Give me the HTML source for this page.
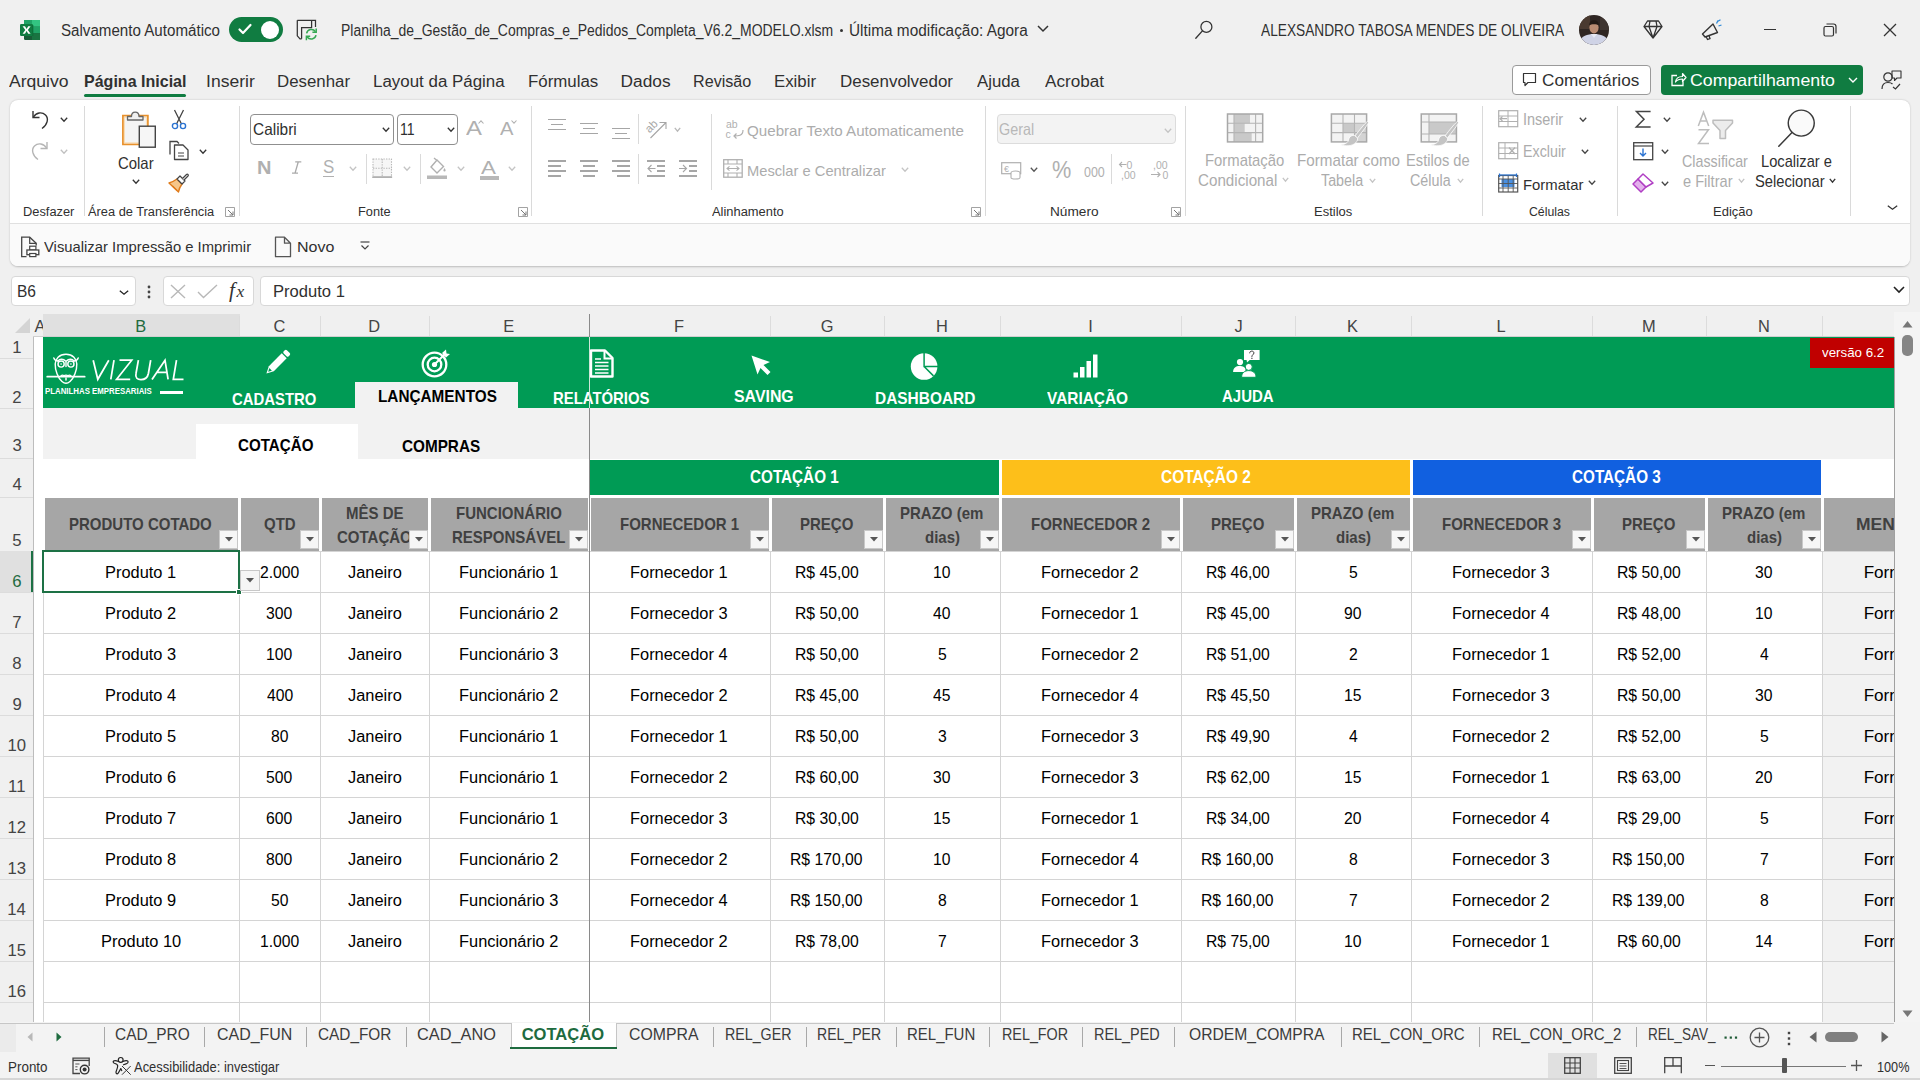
<!DOCTYPE html>
<html><head><meta charset="utf-8"><style>
html,body{margin:0;padding:0;width:1920px;height:1080px;overflow:hidden;background:#f0f0f0;position:relative;font-family:"Liberation Sans",sans-serif;}
.t{position:absolute;white-space:pre;line-height:1;transform-origin:0 0;}
svg{overflow:visible}

</style></head><body>
<div style="position:absolute;left:33px;top:337px;width:1861px;height:685px;background:#fff"></div>
<div style="position:absolute;left:43px;top:551px;width:1851px;height:1px;background:#d4d4d4"></div>
<div style="position:absolute;left:43px;top:592px;width:1851px;height:1px;background:#d4d4d4"></div>
<div style="position:absolute;left:43px;top:633px;width:1851px;height:1px;background:#d4d4d4"></div>
<div style="position:absolute;left:43px;top:674px;width:1851px;height:1px;background:#d4d4d4"></div>
<div style="position:absolute;left:43px;top:715px;width:1851px;height:1px;background:#d4d4d4"></div>
<div style="position:absolute;left:43px;top:756px;width:1851px;height:1px;background:#d4d4d4"></div>
<div style="position:absolute;left:43px;top:797px;width:1851px;height:1px;background:#d4d4d4"></div>
<div style="position:absolute;left:43px;top:838px;width:1851px;height:1px;background:#d4d4d4"></div>
<div style="position:absolute;left:43px;top:879px;width:1851px;height:1px;background:#d4d4d4"></div>
<div style="position:absolute;left:43px;top:920px;width:1851px;height:1px;background:#d4d4d4"></div>
<div style="position:absolute;left:43px;top:961px;width:1851px;height:1px;background:#d4d4d4"></div>
<div style="position:absolute;left:43px;top:1002px;width:1851px;height:1px;background:#d4d4d4"></div>
<div style="position:absolute;left:43px;top:551px;width:1px;height:471px;background:#d4d4d4"></div>
<div style="position:absolute;left:239px;top:551px;width:1px;height:471px;background:#d4d4d4"></div>
<div style="position:absolute;left:320px;top:551px;width:1px;height:471px;background:#d4d4d4"></div>
<div style="position:absolute;left:429px;top:551px;width:1px;height:471px;background:#d4d4d4"></div>
<div style="position:absolute;left:589px;top:551px;width:1px;height:471px;background:#d4d4d4"></div>
<div style="position:absolute;left:770px;top:551px;width:1px;height:471px;background:#d4d4d4"></div>
<div style="position:absolute;left:884px;top:551px;width:1px;height:471px;background:#d4d4d4"></div>
<div style="position:absolute;left:1000px;top:551px;width:1px;height:471px;background:#d4d4d4"></div>
<div style="position:absolute;left:1181px;top:551px;width:1px;height:471px;background:#d4d4d4"></div>
<div style="position:absolute;left:1295px;top:551px;width:1px;height:471px;background:#d4d4d4"></div>
<div style="position:absolute;left:1411px;top:551px;width:1px;height:471px;background:#d4d4d4"></div>
<div style="position:absolute;left:1592px;top:551px;width:1px;height:471px;background:#d4d4d4"></div>
<div style="position:absolute;left:1706px;top:551px;width:1px;height:471px;background:#d4d4d4"></div>
<div style="position:absolute;left:1822px;top:551px;width:1px;height:471px;background:#d4d4d4"></div>
<div style="position:absolute;left:1823px;top:552px;width:71px;height:470px;background:#f2f2f2"></div>
<div style="position:absolute;left:1823px;top:592px;width:71px;height:1px;background:#d4d4d4"></div>
<div style="position:absolute;left:1823px;top:633px;width:71px;height:1px;background:#d4d4d4"></div>
<div style="position:absolute;left:1823px;top:674px;width:71px;height:1px;background:#d4d4d4"></div>
<div style="position:absolute;left:1823px;top:715px;width:71px;height:1px;background:#d4d4d4"></div>
<div style="position:absolute;left:1823px;top:756px;width:71px;height:1px;background:#d4d4d4"></div>
<div style="position:absolute;left:1823px;top:797px;width:71px;height:1px;background:#d4d4d4"></div>
<div style="position:absolute;left:1823px;top:838px;width:71px;height:1px;background:#d4d4d4"></div>
<div style="position:absolute;left:1823px;top:879px;width:71px;height:1px;background:#d4d4d4"></div>
<div style="position:absolute;left:1823px;top:920px;width:71px;height:1px;background:#d4d4d4"></div>
<div style="position:absolute;left:1823px;top:961px;width:71px;height:1px;background:#d4d4d4"></div>
<div style="position:absolute;left:1823px;top:1002px;width:71px;height:1px;background:#d4d4d4"></div>
<div style="position:absolute;left:43px;top:337px;width:1851px;height:71px;background:#009b55"></div>
<div style="position:absolute;left:43px;top:408px;width:1851px;height:51px;background:#f2f2f2"></div>
<div style="position:absolute;left:33px;top:337px;width:10px;height:685px;background:#fff"></div>
<div style="position:absolute;left:590px;top:460px;width:409px;height:35px;background:#009b55"></div>
<div style="position:absolute;left:1002px;top:460px;width:408px;height:35px;background:#fdbf1a"></div>
<div style="position:absolute;left:1413px;top:460px;width:408px;height:35px;background:#1160e0"></div>
<div style="position:absolute;left:45px;top:498px;width:192.5px;height:53px;background:#a6a6a6"></div>
<div style="position:absolute;left:241px;top:498px;width:77.5px;height:53px;background:#a6a6a6"></div>
<div style="position:absolute;left:322px;top:498px;width:105.5px;height:53px;background:#a6a6a6"></div>
<div style="position:absolute;left:431px;top:498px;width:156.5px;height:53px;background:#a6a6a6"></div>
<div style="position:absolute;left:591px;top:498px;width:177.5px;height:53px;background:#a6a6a6"></div>
<div style="position:absolute;left:772px;top:498px;width:110.5px;height:53px;background:#a6a6a6"></div>
<div style="position:absolute;left:886px;top:498px;width:112.5px;height:53px;background:#a6a6a6"></div>
<div style="position:absolute;left:1002px;top:498px;width:177.5px;height:53px;background:#a6a6a6"></div>
<div style="position:absolute;left:1183px;top:498px;width:110.5px;height:53px;background:#a6a6a6"></div>
<div style="position:absolute;left:1297px;top:498px;width:112.5px;height:53px;background:#a6a6a6"></div>
<div style="position:absolute;left:1413px;top:498px;width:177.5px;height:53px;background:#a6a6a6"></div>
<div style="position:absolute;left:1594px;top:498px;width:110.5px;height:53px;background:#a6a6a6"></div>
<div style="position:absolute;left:1708px;top:498px;width:112.5px;height:53px;background:#a6a6a6"></div>
<div style="position:absolute;left:1824px;top:498px;width:70px;height:53px;background:#a6a6a6"></div>
<span class="t" style="left:69.41px;top:516.48px;font-size:17.15px;transform:scaleX(0.8750);font-weight:700;color:#404040;">PRODUTO COTADO</span>
<span class="t" style="left:263.60px;top:516.48px;font-size:17.15px;transform:scaleX(0.8750);font-weight:700;color:#404040;">QTD</span>
<span class="t" style="left:345.56px;top:504.78px;font-size:17.15px;transform:scaleX(0.8750);font-weight:700;color:#404040;">MÊS DE</span>
<span class="t" style="left:337.11px;top:528.58px;font-size:17.15px;transform:scaleX(0.8750);font-weight:700;color:#404040;">COTAÇÃO</span>
<span class="t" style="left:455.89px;top:504.78px;font-size:17.15px;transform:scaleX(0.8750);font-weight:700;color:#404040;">FUNCIONÁRIO</span>
<span class="t" style="left:452.00px;top:528.58px;font-size:17.15px;transform:scaleX(0.8750);font-weight:700;color:#404040;">RESPONSÁVEL</span>
<span class="t" style="left:619.63px;top:516.48px;font-size:17.15px;transform:scaleX(0.8750);font-weight:700;color:#404040;">FORNECEDOR 1</span>
<span class="t" style="left:800.15px;top:516.48px;font-size:17.15px;transform:scaleX(0.8750);font-weight:700;color:#404040;">PREÇO</span>
<span class="t" style="left:900.30px;top:504.78px;font-size:17.15px;transform:scaleX(0.8750);font-weight:700;color:#404040;">PRAZO (em</span>
<span class="t" style="left:924.51px;top:528.58px;font-size:17.15px;transform:scaleX(0.8750);font-weight:700;color:#404040;">dias)</span>
<span class="t" style="left:1030.70px;top:516.48px;font-size:17.15px;transform:scaleX(0.8750);font-weight:700;color:#404040;">FORNECEDOR 2</span>
<span class="t" style="left:1211.15px;top:516.48px;font-size:17.15px;transform:scaleX(0.8750);font-weight:700;color:#404040;">PREÇO</span>
<span class="t" style="left:1311.30px;top:504.78px;font-size:17.15px;transform:scaleX(0.8750);font-weight:700;color:#404040;">PRAZO (em</span>
<span class="t" style="left:1335.51px;top:528.58px;font-size:17.15px;transform:scaleX(0.8750);font-weight:700;color:#404040;">dias)</span>
<span class="t" style="left:1441.70px;top:516.48px;font-size:17.15px;transform:scaleX(0.8750);font-weight:700;color:#404040;">FORNECEDOR 3</span>
<span class="t" style="left:1622.15px;top:516.48px;font-size:17.15px;transform:scaleX(0.8750);font-weight:700;color:#404040;">PREÇO</span>
<span class="t" style="left:1722.30px;top:504.78px;font-size:17.15px;transform:scaleX(0.8750);font-weight:700;color:#404040;">PRAZO (em</span>
<span class="t" style="left:1746.51px;top:528.58px;font-size:17.15px;transform:scaleX(0.8750);font-weight:700;color:#404040;">dias)</span>
<span class="t" style="left:105.17px;top:564.34px;font-size:17.08px;transform:scaleX(0.9600);color:#000;">Produto 1</span>
<span class="t" style="left:259.73px;top:564.34px;font-size:17.08px;transform:scaleX(0.9200);color:#000;">2.000</span>
<span class="t" style="left:347.83px;top:564.34px;font-size:17.08px;transform:scaleX(0.9600);color:#000;">Janeiro</span>
<span class="t" style="left:459.05px;top:564.34px;font-size:17.08px;transform:scaleX(0.9600);color:#000;">Funcionário 1</span>
<span class="t" style="left:630.46px;top:564.34px;font-size:17.08px;transform:scaleX(0.9600);color:#000;">Fornecedor 1</span>
<span class="t" style="left:794.77px;top:564.34px;font-size:17.08px;transform:scaleX(0.9200);color:#000;">R$ 45,00</span>
<span class="t" style="left:933.00px;top:564.34px;font-size:17.08px;transform:scaleX(0.9200);color:#000;">10</span>
<span class="t" style="left:1041.46px;top:564.34px;font-size:17.08px;transform:scaleX(0.9600);color:#000;">Fornecedor 2</span>
<span class="t" style="left:1205.77px;top:564.34px;font-size:17.08px;transform:scaleX(0.9200);color:#000;">R$ 46,00</span>
<span class="t" style="left:1348.60px;top:564.34px;font-size:17.08px;transform:scaleX(0.9200);color:#000;">5</span>
<span class="t" style="left:1452.38px;top:564.34px;font-size:17.08px;transform:scaleX(0.9600);color:#000;">Fornecedor 3</span>
<span class="t" style="left:1616.77px;top:564.34px;font-size:17.08px;transform:scaleX(0.9200);color:#000;">R$ 50,00</span>
<span class="t" style="left:1755.31px;top:564.34px;font-size:17.08px;transform:scaleX(0.9200);color:#000;">30</span>
<span class="t" style="left:1863.63px;top:564.34px;font-size:17.08px;color:#000;">Fornecedor</span>
<span class="t" style="left:105.17px;top:605.34px;font-size:17.08px;transform:scaleX(0.9600);color:#000;">Produto 2</span>
<span class="t" style="left:266.44px;top:605.34px;font-size:17.08px;transform:scaleX(0.9200);color:#000;">300</span>
<span class="t" style="left:347.83px;top:605.34px;font-size:17.08px;transform:scaleX(0.9600);color:#000;">Janeiro</span>
<span class="t" style="left:459.05px;top:605.34px;font-size:17.08px;transform:scaleX(0.9600);color:#000;">Funcionário 2</span>
<span class="t" style="left:630.38px;top:605.34px;font-size:17.08px;transform:scaleX(0.9600);color:#000;">Fornecedor 3</span>
<span class="t" style="left:794.77px;top:605.34px;font-size:17.08px;transform:scaleX(0.9200);color:#000;">R$ 50,00</span>
<span class="t" style="left:933.39px;top:605.34px;font-size:17.08px;transform:scaleX(0.9200);color:#000;">40</span>
<span class="t" style="left:1041.46px;top:605.34px;font-size:17.08px;transform:scaleX(0.9600);color:#000;">Fornecedor 1</span>
<span class="t" style="left:1205.77px;top:605.34px;font-size:17.08px;transform:scaleX(0.9200);color:#000;">R$ 45,00</span>
<span class="t" style="left:1344.23px;top:605.34px;font-size:17.08px;transform:scaleX(0.9200);color:#000;">90</span>
<span class="t" style="left:1452.30px;top:605.34px;font-size:17.08px;transform:scaleX(0.9600);color:#000;">Fornecedor 4</span>
<span class="t" style="left:1616.77px;top:605.34px;font-size:17.08px;transform:scaleX(0.9200);color:#000;">R$ 48,00</span>
<span class="t" style="left:1755.00px;top:605.34px;font-size:17.08px;transform:scaleX(0.9200);color:#000;">10</span>
<span class="t" style="left:1863.63px;top:605.34px;font-size:17.08px;color:#000;">Fornecedor</span>
<span class="t" style="left:105.09px;top:646.34px;font-size:17.08px;transform:scaleX(0.9600);color:#000;">Produto 3</span>
<span class="t" style="left:266.13px;top:646.34px;font-size:17.08px;transform:scaleX(0.9200);color:#000;">100</span>
<span class="t" style="left:347.83px;top:646.34px;font-size:17.08px;transform:scaleX(0.9600);color:#000;">Janeiro</span>
<span class="t" style="left:458.97px;top:646.34px;font-size:17.08px;transform:scaleX(0.9600);color:#000;">Funcionário 3</span>
<span class="t" style="left:630.30px;top:646.34px;font-size:17.08px;transform:scaleX(0.9600);color:#000;">Fornecedor 4</span>
<span class="t" style="left:794.77px;top:646.34px;font-size:17.08px;transform:scaleX(0.9200);color:#000;">R$ 50,00</span>
<span class="t" style="left:937.60px;top:646.34px;font-size:17.08px;transform:scaleX(0.9200);color:#000;">5</span>
<span class="t" style="left:1041.46px;top:646.34px;font-size:17.08px;transform:scaleX(0.9600);color:#000;">Fornecedor 2</span>
<span class="t" style="left:1205.77px;top:646.34px;font-size:17.08px;transform:scaleX(0.9200);color:#000;">R$ 51,00</span>
<span class="t" style="left:1348.60px;top:646.34px;font-size:17.08px;transform:scaleX(0.9200);color:#000;">2</span>
<span class="t" style="left:1452.46px;top:646.34px;font-size:17.08px;transform:scaleX(0.9600);color:#000;">Fornecedor 1</span>
<span class="t" style="left:1616.77px;top:646.34px;font-size:17.08px;transform:scaleX(0.9200);color:#000;">R$ 52,00</span>
<span class="t" style="left:1759.68px;top:646.34px;font-size:17.08px;transform:scaleX(0.9200);color:#000;">4</span>
<span class="t" style="left:1863.63px;top:646.34px;font-size:17.08px;color:#000;">Fornecedor</span>
<span class="t" style="left:105.01px;top:687.34px;font-size:17.08px;transform:scaleX(0.9600);color:#000;">Produto 4</span>
<span class="t" style="left:266.52px;top:687.34px;font-size:17.08px;transform:scaleX(0.9200);color:#000;">400</span>
<span class="t" style="left:347.83px;top:687.34px;font-size:17.08px;transform:scaleX(0.9600);color:#000;">Janeiro</span>
<span class="t" style="left:459.05px;top:687.34px;font-size:17.08px;transform:scaleX(0.9600);color:#000;">Funcionário 2</span>
<span class="t" style="left:630.46px;top:687.34px;font-size:17.08px;transform:scaleX(0.9600);color:#000;">Fornecedor 2</span>
<span class="t" style="left:794.77px;top:687.34px;font-size:17.08px;transform:scaleX(0.9200);color:#000;">R$ 45,00</span>
<span class="t" style="left:933.39px;top:687.34px;font-size:17.08px;transform:scaleX(0.9200);color:#000;">45</span>
<span class="t" style="left:1041.30px;top:687.34px;font-size:17.08px;transform:scaleX(0.9600);color:#000;">Fornecedor 4</span>
<span class="t" style="left:1205.77px;top:687.34px;font-size:17.08px;transform:scaleX(0.9200);color:#000;">R$ 45,50</span>
<span class="t" style="left:1344.00px;top:687.34px;font-size:17.08px;transform:scaleX(0.9200);color:#000;">15</span>
<span class="t" style="left:1452.38px;top:687.34px;font-size:17.08px;transform:scaleX(0.9600);color:#000;">Fornecedor 3</span>
<span class="t" style="left:1616.77px;top:687.34px;font-size:17.08px;transform:scaleX(0.9200);color:#000;">R$ 50,00</span>
<span class="t" style="left:1755.31px;top:687.34px;font-size:17.08px;transform:scaleX(0.9200);color:#000;">30</span>
<span class="t" style="left:1863.63px;top:687.34px;font-size:17.08px;color:#000;">Fornecedor</span>
<span class="t" style="left:105.09px;top:728.34px;font-size:17.08px;transform:scaleX(0.9600);color:#000;">Produto 5</span>
<span class="t" style="left:270.73px;top:728.34px;font-size:17.08px;transform:scaleX(0.9200);color:#000;">80</span>
<span class="t" style="left:347.83px;top:728.34px;font-size:17.08px;transform:scaleX(0.9600);color:#000;">Janeiro</span>
<span class="t" style="left:459.05px;top:728.34px;font-size:17.08px;transform:scaleX(0.9600);color:#000;">Funcionário 1</span>
<span class="t" style="left:630.46px;top:728.34px;font-size:17.08px;transform:scaleX(0.9600);color:#000;">Fornecedor 1</span>
<span class="t" style="left:794.77px;top:728.34px;font-size:17.08px;transform:scaleX(0.9200);color:#000;">R$ 50,00</span>
<span class="t" style="left:937.68px;top:728.34px;font-size:17.08px;transform:scaleX(0.9200);color:#000;">3</span>
<span class="t" style="left:1041.38px;top:728.34px;font-size:17.08px;transform:scaleX(0.9600);color:#000;">Fornecedor 3</span>
<span class="t" style="left:1205.77px;top:728.34px;font-size:17.08px;transform:scaleX(0.9200);color:#000;">R$ 49,90</span>
<span class="t" style="left:1348.68px;top:728.34px;font-size:17.08px;transform:scaleX(0.9200);color:#000;">4</span>
<span class="t" style="left:1452.46px;top:728.34px;font-size:17.08px;transform:scaleX(0.9600);color:#000;">Fornecedor 2</span>
<span class="t" style="left:1616.77px;top:728.34px;font-size:17.08px;transform:scaleX(0.9200);color:#000;">R$ 52,00</span>
<span class="t" style="left:1759.60px;top:728.34px;font-size:17.08px;transform:scaleX(0.9200);color:#000;">5</span>
<span class="t" style="left:1863.63px;top:728.34px;font-size:17.08px;color:#000;">Fornecedor</span>
<span class="t" style="left:105.09px;top:769.34px;font-size:17.08px;transform:scaleX(0.9600);color:#000;">Produto 6</span>
<span class="t" style="left:266.36px;top:769.34px;font-size:17.08px;transform:scaleX(0.9200);color:#000;">500</span>
<span class="t" style="left:347.83px;top:769.34px;font-size:17.08px;transform:scaleX(0.9600);color:#000;">Janeiro</span>
<span class="t" style="left:459.05px;top:769.34px;font-size:17.08px;transform:scaleX(0.9600);color:#000;">Funcionário 1</span>
<span class="t" style="left:630.46px;top:769.34px;font-size:17.08px;transform:scaleX(0.9600);color:#000;">Fornecedor 2</span>
<span class="t" style="left:794.77px;top:769.34px;font-size:17.08px;transform:scaleX(0.9200);color:#000;">R$ 60,00</span>
<span class="t" style="left:933.31px;top:769.34px;font-size:17.08px;transform:scaleX(0.9200);color:#000;">30</span>
<span class="t" style="left:1041.38px;top:769.34px;font-size:17.08px;transform:scaleX(0.9600);color:#000;">Fornecedor 3</span>
<span class="t" style="left:1205.77px;top:769.34px;font-size:17.08px;transform:scaleX(0.9200);color:#000;">R$ 62,00</span>
<span class="t" style="left:1344.00px;top:769.34px;font-size:17.08px;transform:scaleX(0.9200);color:#000;">15</span>
<span class="t" style="left:1452.46px;top:769.34px;font-size:17.08px;transform:scaleX(0.9600);color:#000;">Fornecedor 1</span>
<span class="t" style="left:1616.77px;top:769.34px;font-size:17.08px;transform:scaleX(0.9200);color:#000;">R$ 63,00</span>
<span class="t" style="left:1755.15px;top:769.34px;font-size:17.08px;transform:scaleX(0.9200);color:#000;">20</span>
<span class="t" style="left:1863.63px;top:769.34px;font-size:17.08px;color:#000;">Fornecedor</span>
<span class="t" style="left:105.17px;top:810.34px;font-size:17.08px;transform:scaleX(0.9600);color:#000;">Produto 7</span>
<span class="t" style="left:266.28px;top:810.34px;font-size:17.08px;transform:scaleX(0.9200);color:#000;">600</span>
<span class="t" style="left:347.83px;top:810.34px;font-size:17.08px;transform:scaleX(0.9600);color:#000;">Janeiro</span>
<span class="t" style="left:459.05px;top:810.34px;font-size:17.08px;transform:scaleX(0.9600);color:#000;">Funcionário 1</span>
<span class="t" style="left:630.38px;top:810.34px;font-size:17.08px;transform:scaleX(0.9600);color:#000;">Fornecedor 3</span>
<span class="t" style="left:794.77px;top:810.34px;font-size:17.08px;transform:scaleX(0.9200);color:#000;">R$ 30,00</span>
<span class="t" style="left:933.00px;top:810.34px;font-size:17.08px;transform:scaleX(0.9200);color:#000;">15</span>
<span class="t" style="left:1041.46px;top:810.34px;font-size:17.08px;transform:scaleX(0.9600);color:#000;">Fornecedor 1</span>
<span class="t" style="left:1205.77px;top:810.34px;font-size:17.08px;transform:scaleX(0.9200);color:#000;">R$ 34,00</span>
<span class="t" style="left:1344.15px;top:810.34px;font-size:17.08px;transform:scaleX(0.9200);color:#000;">20</span>
<span class="t" style="left:1452.30px;top:810.34px;font-size:17.08px;transform:scaleX(0.9600);color:#000;">Fornecedor 4</span>
<span class="t" style="left:1616.77px;top:810.34px;font-size:17.08px;transform:scaleX(0.9200);color:#000;">R$ 29,00</span>
<span class="t" style="left:1759.60px;top:810.34px;font-size:17.08px;transform:scaleX(0.9200);color:#000;">5</span>
<span class="t" style="left:1863.63px;top:810.34px;font-size:17.08px;color:#000;">Fornecedor</span>
<span class="t" style="left:105.09px;top:851.34px;font-size:17.08px;transform:scaleX(0.9600);color:#000;">Produto 8</span>
<span class="t" style="left:266.36px;top:851.34px;font-size:17.08px;transform:scaleX(0.9200);color:#000;">800</span>
<span class="t" style="left:347.83px;top:851.34px;font-size:17.08px;transform:scaleX(0.9600);color:#000;">Janeiro</span>
<span class="t" style="left:459.05px;top:851.34px;font-size:17.08px;transform:scaleX(0.9600);color:#000;">Funcionário 2</span>
<span class="t" style="left:630.46px;top:851.34px;font-size:17.08px;transform:scaleX(0.9600);color:#000;">Fornecedor 2</span>
<span class="t" style="left:790.40px;top:851.34px;font-size:17.08px;transform:scaleX(0.9200);color:#000;">R$ 170,00</span>
<span class="t" style="left:933.00px;top:851.34px;font-size:17.08px;transform:scaleX(0.9200);color:#000;">10</span>
<span class="t" style="left:1041.30px;top:851.34px;font-size:17.08px;transform:scaleX(0.9600);color:#000;">Fornecedor 4</span>
<span class="t" style="left:1201.40px;top:851.34px;font-size:17.08px;transform:scaleX(0.9200);color:#000;">R$ 160,00</span>
<span class="t" style="left:1348.60px;top:851.34px;font-size:17.08px;transform:scaleX(0.9200);color:#000;">8</span>
<span class="t" style="left:1452.38px;top:851.34px;font-size:17.08px;transform:scaleX(0.9600);color:#000;">Fornecedor 3</span>
<span class="t" style="left:1612.40px;top:851.34px;font-size:17.08px;transform:scaleX(0.9200);color:#000;">R$ 150,00</span>
<span class="t" style="left:1759.60px;top:851.34px;font-size:17.08px;transform:scaleX(0.9200);color:#000;">7</span>
<span class="t" style="left:1863.63px;top:851.34px;font-size:17.08px;color:#000;">Fornecedor</span>
<span class="t" style="left:105.17px;top:892.34px;font-size:17.08px;transform:scaleX(0.9600);color:#000;">Produto 9</span>
<span class="t" style="left:270.73px;top:892.34px;font-size:17.08px;transform:scaleX(0.9200);color:#000;">50</span>
<span class="t" style="left:347.83px;top:892.34px;font-size:17.08px;transform:scaleX(0.9600);color:#000;">Janeiro</span>
<span class="t" style="left:458.97px;top:892.34px;font-size:17.08px;transform:scaleX(0.9600);color:#000;">Funcionário 3</span>
<span class="t" style="left:630.30px;top:892.34px;font-size:17.08px;transform:scaleX(0.9600);color:#000;">Fornecedor 4</span>
<span class="t" style="left:790.40px;top:892.34px;font-size:17.08px;transform:scaleX(0.9200);color:#000;">R$ 150,00</span>
<span class="t" style="left:937.60px;top:892.34px;font-size:17.08px;transform:scaleX(0.9200);color:#000;">8</span>
<span class="t" style="left:1041.46px;top:892.34px;font-size:17.08px;transform:scaleX(0.9600);color:#000;">Fornecedor 1</span>
<span class="t" style="left:1201.40px;top:892.34px;font-size:17.08px;transform:scaleX(0.9200);color:#000;">R$ 160,00</span>
<span class="t" style="left:1348.60px;top:892.34px;font-size:17.08px;transform:scaleX(0.9200);color:#000;">7</span>
<span class="t" style="left:1452.46px;top:892.34px;font-size:17.08px;transform:scaleX(0.9600);color:#000;">Fornecedor 2</span>
<span class="t" style="left:1612.40px;top:892.34px;font-size:17.08px;transform:scaleX(0.9200);color:#000;">R$ 139,00</span>
<span class="t" style="left:1759.60px;top:892.34px;font-size:17.08px;transform:scaleX(0.9200);color:#000;">8</span>
<span class="t" style="left:1863.63px;top:892.34px;font-size:17.08px;color:#000;">Fornecedor</span>
<span class="t" style="left:100.53px;top:933.34px;font-size:17.08px;transform:scaleX(0.9600);color:#000;">Produto 10</span>
<span class="t" style="left:259.57px;top:933.34px;font-size:17.08px;transform:scaleX(0.9200);color:#000;">1.000</span>
<span class="t" style="left:347.83px;top:933.34px;font-size:17.08px;transform:scaleX(0.9600);color:#000;">Janeiro</span>
<span class="t" style="left:459.05px;top:933.34px;font-size:17.08px;transform:scaleX(0.9600);color:#000;">Funcionário 2</span>
<span class="t" style="left:630.46px;top:933.34px;font-size:17.08px;transform:scaleX(0.9600);color:#000;">Fornecedor 2</span>
<span class="t" style="left:794.77px;top:933.34px;font-size:17.08px;transform:scaleX(0.9200);color:#000;">R$ 78,00</span>
<span class="t" style="left:937.60px;top:933.34px;font-size:17.08px;transform:scaleX(0.9200);color:#000;">7</span>
<span class="t" style="left:1041.38px;top:933.34px;font-size:17.08px;transform:scaleX(0.9600);color:#000;">Fornecedor 3</span>
<span class="t" style="left:1205.77px;top:933.34px;font-size:17.08px;transform:scaleX(0.9200);color:#000;">R$ 75,00</span>
<span class="t" style="left:1344.00px;top:933.34px;font-size:17.08px;transform:scaleX(0.9200);color:#000;">10</span>
<span class="t" style="left:1452.46px;top:933.34px;font-size:17.08px;transform:scaleX(0.9600);color:#000;">Fornecedor 1</span>
<span class="t" style="left:1616.77px;top:933.34px;font-size:17.08px;transform:scaleX(0.9200);color:#000;">R$ 60,00</span>
<span class="t" style="left:1754.92px;top:933.34px;font-size:17.08px;transform:scaleX(0.9200);color:#000;">14</span>
<span class="t" style="left:1863.63px;top:933.34px;font-size:17.08px;color:#000;">Fornecedor</span>
<span class="t" style="left:1855.55px;top:516.48px;font-size:17.15px;transform:scaleX(1.0200);font-weight:700;color:#404040;">MENSAGEM</span>
<div style="position:absolute;left:219px;top:530px;width:19px;height:19px;background:#f6f6f6;border:1px solid #c8c8c8;box-sizing:border-box"></div>
<svg style="position:absolute;left:225px;top:537px;" width="8" height="5" viewBox="0 0 8 5"><path d="M0 0H8L4 4.5Z" fill="#555"/></svg>
<div style="position:absolute;left:300px;top:530px;width:19px;height:19px;background:#f6f6f6;border:1px solid #c8c8c8;box-sizing:border-box"></div>
<svg style="position:absolute;left:306px;top:537px;" width="8" height="5" viewBox="0 0 8 5"><path d="M0 0H8L4 4.5Z" fill="#555"/></svg>
<div style="position:absolute;left:409px;top:530px;width:19px;height:19px;background:#f6f6f6;border:1px solid #c8c8c8;box-sizing:border-box"></div>
<svg style="position:absolute;left:415px;top:537px;" width="8" height="5" viewBox="0 0 8 5"><path d="M0 0H8L4 4.5Z" fill="#555"/></svg>
<div style="position:absolute;left:569px;top:530px;width:19px;height:19px;background:#f6f6f6;border:1px solid #c8c8c8;box-sizing:border-box"></div>
<svg style="position:absolute;left:575px;top:537px;" width="8" height="5" viewBox="0 0 8 5"><path d="M0 0H8L4 4.5Z" fill="#555"/></svg>
<div style="position:absolute;left:750px;top:530px;width:19px;height:19px;background:#f6f6f6;border:1px solid #c8c8c8;box-sizing:border-box"></div>
<svg style="position:absolute;left:756px;top:537px;" width="8" height="5" viewBox="0 0 8 5"><path d="M0 0H8L4 4.5Z" fill="#555"/></svg>
<div style="position:absolute;left:864px;top:530px;width:19px;height:19px;background:#f6f6f6;border:1px solid #c8c8c8;box-sizing:border-box"></div>
<svg style="position:absolute;left:870px;top:537px;" width="8" height="5" viewBox="0 0 8 5"><path d="M0 0H8L4 4.5Z" fill="#555"/></svg>
<div style="position:absolute;left:980px;top:530px;width:19px;height:19px;background:#f6f6f6;border:1px solid #c8c8c8;box-sizing:border-box"></div>
<svg style="position:absolute;left:986px;top:537px;" width="8" height="5" viewBox="0 0 8 5"><path d="M0 0H8L4 4.5Z" fill="#555"/></svg>
<div style="position:absolute;left:1161px;top:530px;width:19px;height:19px;background:#f6f6f6;border:1px solid #c8c8c8;box-sizing:border-box"></div>
<svg style="position:absolute;left:1167px;top:537px;" width="8" height="5" viewBox="0 0 8 5"><path d="M0 0H8L4 4.5Z" fill="#555"/></svg>
<div style="position:absolute;left:1275px;top:530px;width:19px;height:19px;background:#f6f6f6;border:1px solid #c8c8c8;box-sizing:border-box"></div>
<svg style="position:absolute;left:1281px;top:537px;" width="8" height="5" viewBox="0 0 8 5"><path d="M0 0H8L4 4.5Z" fill="#555"/></svg>
<div style="position:absolute;left:1391px;top:530px;width:19px;height:19px;background:#f6f6f6;border:1px solid #c8c8c8;box-sizing:border-box"></div>
<svg style="position:absolute;left:1397px;top:537px;" width="8" height="5" viewBox="0 0 8 5"><path d="M0 0H8L4 4.5Z" fill="#555"/></svg>
<div style="position:absolute;left:1572px;top:530px;width:19px;height:19px;background:#f6f6f6;border:1px solid #c8c8c8;box-sizing:border-box"></div>
<svg style="position:absolute;left:1578px;top:537px;" width="8" height="5" viewBox="0 0 8 5"><path d="M0 0H8L4 4.5Z" fill="#555"/></svg>
<div style="position:absolute;left:1686px;top:530px;width:19px;height:19px;background:#f6f6f6;border:1px solid #c8c8c8;box-sizing:border-box"></div>
<svg style="position:absolute;left:1692px;top:537px;" width="8" height="5" viewBox="0 0 8 5"><path d="M0 0H8L4 4.5Z" fill="#555"/></svg>
<div style="position:absolute;left:1802px;top:530px;width:19px;height:19px;background:#f6f6f6;border:1px solid #c8c8c8;box-sizing:border-box"></div>
<svg style="position:absolute;left:1808px;top:537px;" width="8" height="5" viewBox="0 0 8 5"><path d="M0 0H8L4 4.5Z" fill="#555"/></svg>
<div style="position:absolute;left:42px;top:550px;width:198px;height:43px;border:2px solid #1d7145;box-sizing:border-box"></div>
<div style="position:absolute;left:236px;top:589px;width:6px;height:6px;background:#1d7145;border:1px solid #fff;box-sizing:border-box"></div>
<div style="position:absolute;left:240px;top:570px;width:20px;height:21px;background:#f6f6f6;border:1px solid #c8c8c8;box-sizing:border-box"></div>
<svg style="position:absolute;left:246px;top:578px;" width="8" height="5" viewBox="0 0 8 5"><path d="M0 0H8L4 4.5Z" fill="#555"/></svg>
<div style="position:absolute;left:0px;top:312px;width:1894px;height:25px;background:#f0f0f0"></div>
<div style="position:absolute;left:43px;top:314px;width:196.5px;height:22px;background:#e0e0e0"></div>
<div style="position:absolute;left:239px;top:316px;width:1px;height:20px;background:#dcdcdc"></div>
<div style="position:absolute;left:320px;top:316px;width:1px;height:20px;background:#dcdcdc"></div>
<div style="position:absolute;left:429px;top:316px;width:1px;height:20px;background:#dcdcdc"></div>
<div style="position:absolute;left:589px;top:316px;width:1px;height:20px;background:#dcdcdc"></div>
<div style="position:absolute;left:770px;top:316px;width:1px;height:20px;background:#dcdcdc"></div>
<div style="position:absolute;left:884px;top:316px;width:1px;height:20px;background:#dcdcdc"></div>
<div style="position:absolute;left:1000px;top:316px;width:1px;height:20px;background:#dcdcdc"></div>
<div style="position:absolute;left:1181px;top:316px;width:1px;height:20px;background:#dcdcdc"></div>
<div style="position:absolute;left:1295px;top:316px;width:1px;height:20px;background:#dcdcdc"></div>
<div style="position:absolute;left:1411px;top:316px;width:1px;height:20px;background:#dcdcdc"></div>
<div style="position:absolute;left:1592px;top:316px;width:1px;height:20px;background:#dcdcdc"></div>
<div style="position:absolute;left:1706px;top:316px;width:1px;height:20px;background:#dcdcdc"></div>
<div style="position:absolute;left:1822px;top:316px;width:1px;height:20px;background:#dcdcdc"></div>
<div style="position:absolute;left:33px;top:336px;width:1861px;height:1px;background:#d0d0d0"></div>
<svg style="position:absolute;left:15px;top:318px;" width="16" height="16" viewBox="0 0 16 16"><path d="M15 0V15H0Z" fill="#d4d4d4"/></svg>
<span class="t" style="left:34.50px;top:317.90px;font-size:16.42px;color:#444;">A</span>
<div style="position:absolute;left:43px;top:314px;width:10px;height:22px;background:#e0e0e0"></div>
<span class="t" style="left:135.25px;top:317.90px;font-size:16.42px;color:#1f6b3f;">B</span>
<span class="t" style="left:273.42px;top:317.90px;font-size:16.42px;color:#444;">C</span>
<span class="t" style="left:368.26px;top:317.90px;font-size:16.42px;color:#444;">D</span>
<span class="t" style="left:503.17px;top:317.90px;font-size:16.42px;color:#444;">E</span>
<span class="t" style="left:674.08px;top:317.90px;font-size:16.42px;color:#444;">F</span>
<span class="t" style="left:820.76px;top:317.90px;font-size:16.42px;color:#444;">G</span>
<span class="t" style="left:936.01px;top:317.90px;font-size:16.42px;color:#444;">H</span>
<span class="t" style="left:1088.20px;top:317.90px;font-size:16.42px;color:#444;">I</span>
<span class="t" style="left:1234.39px;top:317.90px;font-size:16.42px;color:#444;">J</span>
<span class="t" style="left:1346.92px;top:317.90px;font-size:16.42px;color:#444;">K</span>
<span class="t" style="left:1496.49px;top:317.90px;font-size:16.42px;color:#444;">L</span>
<span class="t" style="left:1642.10px;top:317.90px;font-size:16.42px;color:#444;">M</span>
<span class="t" style="left:1758.01px;top:317.90px;font-size:16.42px;color:#444;">N</span>
<div style="position:absolute;left:0px;top:337px;width:33px;height:685px;background:#f0f0f0"></div>
<div style="position:absolute;left:33px;top:337px;width:1px;height:685px;background:#bdbdbd"></div>
<div style="position:absolute;left:0px;top:358px;width:33px;height:1px;background:#dcdcdc"></div>
<div style="position:absolute;left:0px;top:408px;width:33px;height:1px;background:#dcdcdc"></div>
<div style="position:absolute;left:0px;top:458px;width:33px;height:1px;background:#dcdcdc"></div>
<div style="position:absolute;left:0px;top:497px;width:33px;height:1px;background:#dcdcdc"></div>
<div style="position:absolute;left:0px;top:551px;width:33px;height:1px;background:#dcdcdc"></div>
<div style="position:absolute;left:0px;top:592px;width:33px;height:1px;background:#dcdcdc"></div>
<div style="position:absolute;left:0px;top:633px;width:33px;height:1px;background:#dcdcdc"></div>
<div style="position:absolute;left:0px;top:674px;width:33px;height:1px;background:#dcdcdc"></div>
<div style="position:absolute;left:0px;top:715px;width:33px;height:1px;background:#dcdcdc"></div>
<div style="position:absolute;left:0px;top:756px;width:33px;height:1px;background:#dcdcdc"></div>
<div style="position:absolute;left:0px;top:797px;width:33px;height:1px;background:#dcdcdc"></div>
<div style="position:absolute;left:0px;top:838px;width:33px;height:1px;background:#dcdcdc"></div>
<div style="position:absolute;left:0px;top:879px;width:33px;height:1px;background:#dcdcdc"></div>
<div style="position:absolute;left:0px;top:920px;width:33px;height:1px;background:#dcdcdc"></div>
<div style="position:absolute;left:0px;top:961px;width:33px;height:1px;background:#dcdcdc"></div>
<div style="position:absolute;left:0px;top:1002px;width:33px;height:1px;background:#dcdcdc"></div>
<div style="position:absolute;left:0px;top:1022px;width:33px;height:1px;background:#dcdcdc"></div>
<div style="position:absolute;left:0px;top:551px;width:33px;height:41px;background:#e0e0e0"></div>
<div style="position:absolute;left:31px;top:551px;width:2px;height:41px;background:#1d7145"></div>
<span class="t" style="left:12.15px;top:339.85px;font-size:16.72px;color:#444;">1</span>
<span class="t" style="left:12.32px;top:389.85px;font-size:16.72px;color:#444;">2</span>
<span class="t" style="left:12.40px;top:437.85px;font-size:16.72px;color:#444;">3</span>
<span class="t" style="left:12.40px;top:476.85px;font-size:16.72px;color:#444;">4</span>
<span class="t" style="left:12.32px;top:532.85px;font-size:16.72px;color:#444;">5</span>
<span class="t" style="left:12.24px;top:573.85px;font-size:16.72px;color:#1f6b3f;">6</span>
<span class="t" style="left:12.32px;top:614.85px;font-size:16.72px;color:#444;">7</span>
<span class="t" style="left:12.32px;top:655.85px;font-size:16.72px;color:#444;">8</span>
<span class="t" style="left:12.40px;top:696.85px;font-size:16.72px;color:#444;">9</span>
<span class="t" style="left:7.42px;top:737.85px;font-size:16.72px;color:#444;">10</span>
<span class="t" style="left:8.12px;top:778.85px;font-size:16.72px;color:#444;">11</span>
<span class="t" style="left:7.50px;top:819.85px;font-size:16.72px;color:#444;">12</span>
<span class="t" style="left:7.42px;top:860.85px;font-size:16.72px;color:#444;">13</span>
<span class="t" style="left:7.34px;top:901.85px;font-size:16.72px;color:#444;">14</span>
<span class="t" style="left:7.42px;top:942.85px;font-size:16.72px;color:#444;">15</span>
<span class="t" style="left:7.42px;top:983.85px;font-size:16.72px;color:#444;">16</span>
<svg style="position:absolute;left:44px;top:348px;" width="44" height="40" viewBox="0 0 44 40">
<g fill="none" stroke="#fff" stroke-width="1.45" stroke-linecap="round" stroke-linejoin="round">
<path d="M22 6.3 C15 6.3 11.5 11 11.2 16 C11 22 14 30 18 33.5 C19.5 34.8 20.5 35.3 22 35.3 C23.5 35.3 24.5 34.8 26 33.5 C30 30 33 22 32.8 16 C32.5 11 29 6.3 22 6.3Z"/>
<path d="M9.8 10 C10.5 12 12 13 14 13 M34.2 10 C33.5 12 32 13 30 13"/>
<circle cx="17.1" cy="16" r="3.1"/><circle cx="26.9" cy="16" r="3.1"/>
<path d="M14 13 C16 10.5 19 10.8 22 13.3 C25 10.8 28 10.5 30 13 M22 13.3 V18.5"/>
<path d="M3.2 28.7 H40.7" stroke-width="1.7"/>
<path d="M17 28 C18 26.8 19 26.8 20 28 C21 26.8 23 26.8 24 28 C25 26.8 26 26.8 27 28 M22 30 V32"/>
</g>
<circle cx="17.1" cy="16" r="1" fill="#fff" opacity="0.6"/><circle cx="26.9" cy="16" r="1" fill="#fff" opacity="0.6"/>
</svg>
<svg style="position:absolute;left:90px;top:352px;" width="100" height="30" viewBox="0 0 100 30"><g fill="none" stroke="#fff" stroke-width="1.75" stroke-linecap="butt" stroke-linejoin="miter">
<path d="M3.2 8.2 L7.8 27.3 L18.8 8.2"/>
<path d="M24 8.1 L20.8 27.4"/>
<path d="M29.5 8.2 H41.7 L26.6 27.3 H40.2"/>
<path d="M48.4 8.1 L46 21.5 C45 26 47.5 27.6 51 27.6 C55 27.6 57.5 26 58.4 21.5 L60.7 8.1"/>
<path d="M62 27.4 L75 8.2 L78.1 27.4 M66.8 20.4 H76.9"/>
<path d="M86.5 8.1 L83.3 27.3 H93.5"/>
</g></svg>
<span class="t" style="left:45.33px;top:388.39px;font-size:8.28px;transform:scaleX(0.9484);font-weight:700;color:#ffffff;">PLANILHAS EMPRESARIAIS</span>
<div style="position:absolute;left:159.5px;top:391.2px;width:23px;height:2.5px;background:#fff"></div>
<div style="position:absolute;left:355px;top:382px;width:163px;height:26px;background:#f2f2f2"></div>
<span class="t" style="left:232.40px;top:391.51px;font-size:15.70px;transform:scaleX(0.9484);font-weight:700;color:#ffffff;">CADASTRO</span>
<span class="t" style="left:378.28px;top:389.29px;font-size:15.84px;transform:scaleX(0.9679);font-weight:700;color:#000;">LANÇAMENTOS</span>
<span class="t" style="left:553.11px;top:391.03px;font-size:16.86px;transform:scaleX(0.8825);font-weight:700;color:#ffffff;">RELATÓRIOS</span>
<span class="t" style="left:734.18px;top:389.03px;font-size:16.86px;transform:scaleX(0.9423);font-weight:700;color:#ffffff;">SAVING</span>
<span class="t" style="left:875.07px;top:391.03px;font-size:16.86px;transform:scaleX(0.9163);font-weight:700;color:#ffffff;">DASHBOARD</span>
<span class="t" style="left:1047.00px;top:391.03px;font-size:16.86px;transform:scaleX(0.9144);font-weight:700;color:#ffffff;">VARIAÇÃO</span>
<span class="t" style="left:1221.70px;top:389.03px;font-size:16.86px;transform:scaleX(0.8890);font-weight:700;color:#ffffff;">AJUDA</span>
<svg style="position:absolute;left:263px;top:349px;" width="29" height="28" viewBox="0 0 29 28"><g transform="rotate(45 14 14)"><rect x="10.5" y="-2" width="7" height="4.5" rx="1.5" fill="#fff"/><path d="M10.5 3.8 H17.5 V22 L14 29 L10.5 22Z" fill="#fff"/><path d="M12.2 23 L14 26.5 L15.8 23Z" fill="#009b55"/></g></svg>
<svg style="position:absolute;left:421px;top:349px;" width="30" height="30" viewBox="0 0 30 30"><g fill="none" stroke="#fff" stroke-width="2.3"><circle cx="13.5" cy="15.5" r="11.8"/><circle cx="13.5" cy="15.5" r="6.8"/></g>
<circle cx="13.5" cy="15.5" r="2.6" fill="#fff"/><path d="M13.5 15.5 L24 5" stroke="#fff" stroke-width="2"/><path d="M21 4 L25 0.5 L25.5 4.5 L29 5 L25 8.5 Z" fill="#fff"/></svg>
<svg style="position:absolute;left:589px;top:349px;" width="26" height="29" viewBox="0 0 26 29"><path d="M2 1.5 H16 L23.5 9 V27.5 H2Z" fill="none" stroke="#fff" stroke-width="2.4" stroke-linejoin="round"/><path d="M15.5 1.5 V9.5 H23.5" fill="none" stroke="#fff" stroke-width="2"/>
<g stroke="#fff" stroke-width="1.6"><path d="M6 13.5H19.5M6 17H19.5M6 20.5H19.5M6 24H19.5M6 10H12"/></g></svg>
<svg style="position:absolute;left:751px;top:355px;" width="20" height="21" viewBox="0 0 20 21"><path d="M0.5 0.5 L19 7 L12.5 10 L19.5 17 L16.5 20 L9.5 13 L6.5 19.5Z" fill="#fff"/></svg>
<svg style="position:absolute;left:909px;top:352px;" width="30" height="30" viewBox="0 0 30 30"><circle cx="15.1" cy="14.5" r="13.3" fill="#fff"/><path d="M15.1 0 V14.5 H29 M15.1 14.5 L24.5 23.9" fill="none" stroke="#009b55" stroke-width="1.5"/></svg>
<svg style="position:absolute;left:1073px;top:354px;" width="27" height="24" viewBox="0 0 27 24"><g fill="#fff"><rect x="0.5" y="18.5" width="4.5" height="5"/><rect x="7" y="13" width="4.5" height="10.5"/><rect x="13.5" y="7" width="4.5" height="16.5"/><rect x="20" y="0.5" width="4.5" height="23"/></g></svg>
<svg style="position:absolute;left:1230px;top:348px;" width="30" height="32" viewBox="0 0 30 32"><g fill="#fff">
<rect x="14" y="2" width="15.6" height="10"/><path d="M16.5 11.5 L17 14.6 L20.2 11.5Z"/>
<circle cx="10" cy="14.1" r="3.1"/><path d="M3.1 24.1 C3.1 19.8 6 18 9.5 18 C13 18 15.5 19.5 15.5 21 V24.1Z"/>
<circle cx="18.75" cy="18.9" r="3.5" stroke="#009b55" stroke-width="1"/><path d="M11.6 29.3 C11.6 24.8 14.6 22.6 18.8 22.6 C23 22.6 26 24.8 26 29.3Z" stroke="#009b55" stroke-width="1"/></g>
<path d="M19.7 5.3 C19.7 3.7 20.7 3.1 21.8 3.1 C23 3.1 23.9 3.8 23.9 5 C23.9 6.6 21.9 6.8 21.9 8.6 V9.2" fill="none" stroke="#3a3a3a" stroke-width="1"/><circle cx="21.9" cy="10.4" r="0.6" fill="#3a3a3a"/></svg>
<div style="position:absolute;left:1810px;top:338px;width:84px;height:30px;background:#c00000"></div>
<span class="t" style="left:1821.70px;top:347.25px;font-size:12.94px;transform:scaleX(1.0300);color:#ffffff;">versão 6.2</span>
<div style="position:absolute;left:196px;top:424px;width:162px;height:35px;background:#fff"></div>
<span class="t" style="left:238.39px;top:438.46px;font-size:15.99px;transform:scaleX(0.9472);font-weight:700;color:#000;">COTAÇÃO</span>
<span class="t" style="left:402.39px;top:439.46px;font-size:15.99px;transform:scaleX(0.9566);font-weight:700;color:#000;">COMPRAS</span>
<div style="position:absolute;left:590px;top:459px;width:1232px;height:1px;background:#fff"></div>
<span class="t" style="left:750.39px;top:469.43px;font-size:17.44px;transform:scaleX(0.8751);font-weight:700;color:#ffffff;">COTAÇÃO 1</span>
<span class="t" style="left:1161.04px;top:469.43px;font-size:17.44px;transform:scaleX(0.8860);font-weight:700;color:#ffffff;">COTAÇÃO 2</span>
<span class="t" style="left:1572.39px;top:469.43px;font-size:17.44px;transform:scaleX(0.8752);font-weight:700;color:#ffffff;">COTAÇÃO 3</span>
<div style="position:absolute;left:0px;top:0px;width:1920px;height:312px;background:#f0f0f0"></div>
<svg style="position:absolute;left:20px;top:20px;" width="20" height="20" viewBox="0 0 20 20"><rect x="4" y="0" width="16" height="20" rx="1.2" fill="#185c37"/>
<rect x="4" y="0" width="8" height="6.7" fill="#21a366"/><rect x="12" y="0" width="8" height="6.7" fill="#33c481"/>
<rect x="4" y="6.7" width="8" height="6.6" fill="#107c41"/><rect x="12" y="6.7" width="8" height="6.6" fill="#21a366"/>
<rect x="12" y="13.3" width="8" height="6.7" fill="#1a7341"/>
<rect x="0" y="4" width="13" height="12" rx="1.2" fill="#107c41"/><rect x="12" y="5" width="1.5" height="11" fill="#0b6a35" opacity="0.6"/>
<path d="M2.6 6.2 H5 L6.6 9 L8.2 6.2 H10.6 L7.9 10 L10.6 13.8 H8.2 L6.6 11 L5 13.8 H2.6 L5.3 10Z" fill="#fff"/></svg>
<span class="t" style="left:60.99px;top:23.49px;font-size:15.84px;transform:scaleX(0.9560);color:#303030;">Salvamento Automático</span>
<div style="position:absolute;left:229px;top:17px;width:54px;height:25px;background:#107c41;border-radius:13px"></div>
<svg style="position:absolute;left:238px;top:23px;" width="14" height="12" viewBox="0 0 14 12"><path d="M1.5 6.5 L5 10 L12.5 2" fill="none" stroke="#fff" stroke-width="2.2" stroke-linecap="round" stroke-linejoin="round"/></svg>
<div style="position:absolute;left:260.7px;top:20.6px;width:18.2px;height:18.2px;background:#fff;border-radius:50%"></div>
<svg style="position:absolute;left:296px;top:19px;" width="24" height="23" viewBox="0 0 24 23"><path d="M1.3 1.3 H19.5 V8 M1.3 1.3 V16.8 L4 19.8 H5.6 M5.6 19.8 V8.5 H15.6 V1.3" fill="none" stroke="#333" stroke-width="1.25"/>
<path d="M10.6 14.3 A4.9 4.9 0 0 1 19.4 12.6 M20 16.2 A4.9 4.9 0 0 1 11.2 18" fill="none" stroke="#35a853" stroke-width="1.5"/>
<path d="M20.2 9.4 V13.3 H16.4" fill="none" stroke="#35a853" stroke-width="1.5"/><path d="M10.4 21.2 V17.3 H14.2" fill="none" stroke="#35a853" stroke-width="1.5"/></svg>
<span class="t" style="left:340.88px;top:23.49px;font-size:15.84px;transform:scaleX(0.8822);color:#303030;">Planilha_de_Gestão_de_Compras_e_Pedidos_Completa_V6.2_MODELO.xlsm</span>
<div style="position:absolute;left:840.2px;top:29.3px;width:3.2px;height:3.2px;background:#333;border-radius:50%"></div>
<span class="t" style="left:849.42px;top:23.49px;font-size:15.84px;transform:scaleX(0.9719);color:#303030;">Última modificação: Agora</span>
<svg style="position:absolute;left:1037px;top:25px;" width="12" height="8" viewBox="0 0 12 8"><path d="M1 1 L6 6 L11 1" fill="none" stroke="#333" stroke-width="1.5"/></svg>
<svg style="position:absolute;left:1194px;top:19px;" width="22" height="22" viewBox="0 0 22 22"><circle cx="12.4" cy="7.9" r="5.5" fill="none" stroke="#333" stroke-width="1.25"/><path d="M8.4 11.9 L1.8 19.3" stroke="#333" stroke-width="1.35" stroke-linecap="round"/></svg>
<span class="t" style="left:1261.00px;top:23.49px;font-size:15.84px;transform:scaleX(0.8653);color:#303030;">ALEXSANDRO TABOSA MENDES DE OLIVEIRA</span>
<svg style="position:absolute;left:1579px;top:15px;" width="30" height="30" viewBox="0 0 30 30"><defs><clipPath id="av"><circle cx="15" cy="15" r="15"/></clipPath></defs>
<g clip-path="url(#av)"><rect width="30" height="30" fill="#2e2522"/><rect x="0" y="0" width="11" height="14" fill="#4a3a30"/><rect x="21" y="3" width="9" height="12" fill="#3e3430"/>
<path d="M-1 31 C0 22 7 19 15 19 C23 19 30 22 31 31Z" fill="#cfd3e6"/>
<path d="M12 19 L15 23 L18 19Z" fill="#e8eaf4"/>
<ellipse cx="15" cy="12.5" rx="4.6" ry="6" fill="#b98b72"/><path d="M10.3 10.5 C10.3 6.5 12.5 5.3 15 5.3 C17.5 5.3 19.7 6.5 19.7 10.5 C18 8.8 12 8.8 10.3 10.5Z" fill="#231a16"/></g></svg>
<svg style="position:absolute;left:1643px;top:20px;" width="20" height="19" viewBox="0 0 20 19"><path d="M4.5 1 H15.5 L19 6.5 L10 18 L1 6.5Z M1 6.5 H19 M7 1 L6 6.5 L10 18 L14 6.5 L13 1" fill="none" stroke="#333" stroke-width="1.3" stroke-linejoin="round"/></svg>
<svg style="position:absolute;left:1701px;top:19px;" width="22" height="21" viewBox="0 0 22 21"><path d="M1.5 15 L12 5 L16.5 13.5 L4 18Z" fill="none" stroke="#333" stroke-width="1.4" stroke-linejoin="round"/>
<path d="M5 17.5 L6.5 20.5 L9 19.5 L8 16.5" fill="none" stroke="#333" stroke-width="1.3"/>
<path d="M15.5 4.5 L17 1.5 M17.5 7 L20.5 6 M16.5 2.5 L19.5 0.8" stroke="#2f8ad8" stroke-width="1.3"/></svg>
<div style="position:absolute;left:1764px;top:29px;width:12px;height:1.2px;background:#333"></div>
<svg style="position:absolute;left:1823px;top:23px;" width="14" height="14" viewBox="0 0 14 14"><rect x="1" y="3.5" width="9.5" height="9.5" rx="1.5" fill="none" stroke="#333" stroke-width="1.2"/><path d="M3.5 1 H10.5 Q13 1 13 3.5 V10.5" fill="none" stroke="#333" stroke-width="1.2"/></svg>
<svg style="position:absolute;left:1883px;top:23px;" width="14" height="14" viewBox="0 0 14 14"><path d="M1 1 L13 13 M13 1 L1 13" stroke="#333" stroke-width="1.3"/></svg>
<span class="t" style="left:9.00px;top:73.26px;font-size:17.30px;transform:scaleX(1.0169);color:#303030;">Arquivo</span>
<span class="t" style="left:83.54px;top:73.26px;font-size:17.30px;transform:scaleX(0.9277);font-weight:700;color:#303030;">Página Inicial</span>
<span class="t" style="left:206.42px;top:73.26px;font-size:17.30px;transform:scaleX(1.0157);color:#303030;">Inserir</span>
<span class="t" style="left:277.15px;top:73.26px;font-size:17.30px;transform:scaleX(0.9743);color:#303030;">Desenhar</span>
<span class="t" style="left:372.65px;top:73.26px;font-size:17.30px;transform:scaleX(0.9788);color:#303030;">Layout da Página</span>
<span class="t" style="left:528.15px;top:73.26px;font-size:17.30px;transform:scaleX(0.9761);color:#303030;">Fórmulas</span>
<span class="t" style="left:620.62px;top:73.26px;font-size:17.30px;color:#303030;">Dados</span>
<span class="t" style="left:693.21px;top:73.26px;font-size:17.30px;transform:scaleX(0.9342);color:#303030;">Revisão</span>
<span class="t" style="left:774.15px;top:73.26px;font-size:17.30px;transform:scaleX(0.9726);color:#303030;">Exibir</span>
<span class="t" style="left:840.14px;top:73.26px;font-size:17.30px;transform:scaleX(0.9801);color:#303030;">Desenvolvedor</span>
<span class="t" style="left:977.00px;top:73.26px;font-size:17.30px;transform:scaleX(0.9706);color:#303030;">Ajuda</span>
<span class="t" style="left:1044.50px;top:73.26px;font-size:17.30px;transform:scaleX(0.9892);color:#303030;">Acrobat</span>
<div style="position:absolute;left:84px;top:94px;width:102px;height:3px;background:#107c41;border-radius:2px"></div>
<div style="position:absolute;left:1512px;top:65px;width:139px;height:30px;background:#fff;border:1px solid #9a9a9a;border-radius:4px;box-sizing:border-box"></div>
<svg style="position:absolute;left:1522px;top:72px;" width="15" height="15" viewBox="0 0 15 15"><path d="M1.5 1.5 H13.5 V10.5 H6 L3 13.5 V10.5 H1.5Z" fill="none" stroke="#333" stroke-width="1.2" stroke-linejoin="round"/></svg>
<span class="t" style="left:1542.14px;top:72.85px;font-size:16.72px;transform:scaleX(1.0276);color:#303030;">Comentários</span>
<div style="position:absolute;left:1661px;top:65px;width:202px;height:30px;background:#107c41;border-radius:4px"></div>
<svg style="position:absolute;left:1670px;top:71px;" width="17" height="16" viewBox="0 0 17 16"><path d="M7 4.5 H2 V14.5 H13 V10.5" fill="none" stroke="#fff" stroke-width="1.3"/><path d="M5.5 11 C6 7 9 5.5 12.5 5.5 V2.5 L16 6.5 L12.5 10.5 V8 C10 8 7.5 8.5 5.5 11Z" fill="none" stroke="#fff" stroke-width="1.2" stroke-linejoin="round"/></svg>
<span class="t" style="left:1690.11px;top:72.85px;font-size:16.72px;transform:scaleX(1.0619);color:#fff;">Compartilhamento</span>
<svg style="position:absolute;left:1848px;top:77px;" width="10" height="6" viewBox="0 0 10 6"><path d="M1 1 L5 5 L9 1" fill="none" stroke="#fff" stroke-width="1.4"/></svg>
<svg style="position:absolute;left:1881px;top:70px;" width="21" height="20" viewBox="0 0 21 20"><circle cx="7" cy="7" r="4.2" fill="none" stroke="#333" stroke-width="1.2"/><path d="M1 19 C1 14 3.5 12.5 7 12.5 C9 12.5 10.5 13 11.5 14" fill="none" stroke="#333" stroke-width="1.2"/><path d="M11 1 H20 V8 H16 L13.5 10.5 V8 H11Z" fill="none" stroke="#333" stroke-width="1.1" stroke-linejoin="round"/><path d="M12 17 L14.5 19 L19 14" fill="none" stroke="#333" stroke-width="1.2"/></svg>
<div style="position:absolute;left:10px;top:100px;width:1900px;height:166px;background:#fff;border-radius:8px;box-shadow:0 0.5px 2px rgba(0,0,0,0.22)"></div>
<div style="position:absolute;left:10px;top:223px;width:1900px;height:43px;background:#fafafa;border-top:1px solid #e0e0e0;border-radius:0 0 8px 8px;box-sizing:border-box"></div>
<div style="position:absolute;left:84px;top:106px;width:1px;height:110px;background:#dadada"></div>
<div style="position:absolute;left:239px;top:106px;width:1px;height:110px;background:#dadada"></div>
<div style="position:absolute;left:531px;top:106px;width:1px;height:110px;background:#dadada"></div>
<div style="position:absolute;left:985px;top:106px;width:1px;height:110px;background:#dadada"></div>
<div style="position:absolute;left:1185px;top:106px;width:1px;height:110px;background:#dadada"></div>
<div style="position:absolute;left:1482px;top:106px;width:1px;height:110px;background:#dadada"></div>
<div style="position:absolute;left:1617px;top:106px;width:1px;height:110px;background:#dadada"></div>
<div style="position:absolute;left:1850px;top:106px;width:1px;height:110px;background:#dadada"></div>
<span class="t" style="left:23.27px;top:206.09px;font-size:12.65px;transform:scaleX(1.0157);color:#303030;">Desfazer</span>
<span class="t" style="left:88.00px;top:206.09px;font-size:12.65px;transform:scaleX(1.0145);color:#303030;">Área de Transferência</span>
<span class="t" style="left:358.28px;top:206.09px;font-size:12.65px;transform:scaleX(1.0108);color:#303030;">Fonte</span>
<span class="t" style="left:712.00px;top:206.09px;font-size:12.65px;transform:scaleX(1.0209);color:#303030;">Alinhamento</span>
<span class="t" style="left:1050.21px;top:206.09px;font-size:12.65px;transform:scaleX(1.0803);color:#303030;">Número</span>
<span class="t" style="left:1313.96px;top:206.09px;font-size:12.65px;transform:scaleX(1.0264);color:#303030;">Estilos</span>
<span class="t" style="left:1528.89px;top:206.09px;font-size:12.65px;transform:scaleX(0.9718);color:#303030;">Células</span>
<span class="t" style="left:1713.26px;top:206.09px;font-size:12.65px;transform:scaleX(1.0270);color:#303030;">Edição</span>
<svg style="position:absolute;left:225px;top:207px;" width="10" height="10" viewBox="0 0 10 10"><path d="M0.5 0.5 H9.5 V9.5 H0.5Z" fill="none" stroke="#999" stroke-width="0.9"/><path d="M3 3 L8 8 M8 4.5 V8 H4.5" fill="none" stroke="#777" stroke-width="1"/></svg>
<svg style="position:absolute;left:517.5px;top:207px;" width="10" height="10" viewBox="0 0 10 10"><path d="M0.5 0.5 H9.5 V9.5 H0.5Z" fill="none" stroke="#999" stroke-width="0.9"/><path d="M3 3 L8 8 M8 4.5 V8 H4.5" fill="none" stroke="#777" stroke-width="1"/></svg>
<svg style="position:absolute;left:971px;top:207px;" width="10" height="10" viewBox="0 0 10 10"><path d="M0.5 0.5 H9.5 V9.5 H0.5Z" fill="none" stroke="#999" stroke-width="0.9"/><path d="M3 3 L8 8 M8 4.5 V8 H4.5" fill="none" stroke="#777" stroke-width="1"/></svg>
<svg style="position:absolute;left:1171px;top:207px;" width="10" height="10" viewBox="0 0 10 10"><path d="M0.5 0.5 H9.5 V9.5 H0.5Z" fill="none" stroke="#999" stroke-width="0.9"/><path d="M3 3 L8 8 M8 4.5 V8 H4.5" fill="none" stroke="#777" stroke-width="1"/></svg>
<svg style="position:absolute;left:30px;top:109px;" width="20" height="21" viewBox="0 0 20 21"><path d="M3 2 V8.5 H9.5" fill="none" stroke="#333" stroke-width="1.4"/><path d="M3.5 8 C6 3.5 12 2.5 15.5 6 C19 9.5 17.5 15.5 12 19.5" fill="none" stroke="#333" stroke-width="1.4"/></svg>
<svg style="position:absolute;left:59.5px;top:117.0px;" width="8" height="5" viewBox="0 0 8 5"><path d="M0.8 0.8 L4.0 4.2 L7.2 0.8" fill="none" stroke="#333" stroke-width="1.3"/></svg>
<svg style="position:absolute;left:30px;top:140px;" width="20" height="21" viewBox="0 0 20 21"><path d="M17 2 V8.5 H10.5" fill="none" stroke="#b5b5b5" stroke-width="1.4"/><path d="M16.5 8 C14 3.5 8 2.5 4.5 6 C1 9.5 2.5 15.5 8 19.5" fill="none" stroke="#b5b5b5" stroke-width="1.4"/></svg>
<svg style="position:absolute;left:59.5px;top:148.5px;" width="8" height="5" viewBox="0 0 8 5"><path d="M0.8 0.8 L4.0 4.2 L7.2 0.8" fill="none" stroke="#c0c0c0" stroke-width="1.3"/></svg>
<svg style="position:absolute;left:121px;top:109px;" width="37" height="40" viewBox="0 0 37 40"><rect x="1.9" y="6.6" width="25" height="28.8" fill="#fbf3e8" stroke="#e8912c" stroke-width="1.7"/>
<rect x="3.5" y="8.2" width="21.8" height="25.6" fill="#f4f4f4" stroke="#f8d7a8" stroke-width="0.8"/>
<path d="M6.5 11 V7.5 H10.5 C10.5 4.8 12 3.2 14.2 3.2 C16.4 3.2 18 4.8 18 7.5 H22 V11Z" fill="#f0f0f0" stroke="#666" stroke-width="1.3" stroke-linejoin="round"/>
<rect x="18.3" y="17.2" width="16" height="21" fill="#f6f6f6" stroke="#444" stroke-width="1.4"/></svg>
<span class="t" style="left:117.55px;top:155.85px;font-size:16.72px;transform:scaleX(0.8923);color:#303030;">Colar</span>
<svg style="position:absolute;left:131.5px;top:179.0px;" width="8" height="5" viewBox="0 0 8 5"><path d="M0.8 0.8 L4.0 4.2 L7.2 0.8" fill="none" stroke="#333" stroke-width="1.3"/></svg>
<svg style="position:absolute;left:171px;top:109px;" width="16" height="21" viewBox="0 0 16 21"><path d="M3.5 1 L10.5 15 M12.5 1 L5.5 15" stroke="#444" stroke-width="1.3"/><circle cx="4" cy="17" r="2.6" fill="none" stroke="#2b73d1" stroke-width="1.4"/><circle cx="12" cy="17" r="2.6" fill="none" stroke="#2b73d1" stroke-width="1.4"/></svg>
<svg style="position:absolute;left:168px;top:140px;" width="22" height="21" viewBox="0 0 22 21"><path d="M2 14.5 V1.5 H9 L11 3.5" fill="none" stroke="#444" stroke-width="1.3"/><path d="M6.5 5 H15 L20 10 V19.5 H6.5Z" fill="#fff" stroke="#444" stroke-width="1.3" stroke-linejoin="round"/><path d="M10 13 H16 M10 16 H16" stroke="#444" stroke-width="1"/></svg>
<svg style="position:absolute;left:198.5px;top:148.5px;" width="8" height="5" viewBox="0 0 8 5"><path d="M0.8 0.8 L4.0 4.2 L7.2 0.8" fill="none" stroke="#333" stroke-width="1.3"/></svg>
<svg style="position:absolute;left:168px;top:171px;" width="22" height="22" viewBox="0 0 22 22"><path d="M1 12 C4 11 7 9.5 9 8 L14 13 C12.5 15 11 18 10.5 21 Z" fill="#f6c68a" stroke="#e07b1a" stroke-width="1.4" stroke-linejoin="round"/><path d="M4.5 15 L9 19.5" stroke="#e07b1a" stroke-width="1.1"/><path d="M9 8 L12 5 L17 10 L14 13Z" fill="#fff" stroke="#444" stroke-width="1.2" stroke-linejoin="round"/><path d="M14.5 7.5 L18.5 3.5 C19.5 2.5 21 4 20 5 L16 9" fill="#fff" stroke="#444" stroke-width="1.2"/></svg>
<div style="position:absolute;left:250px;top:114px;width:143.5px;height:30.5px;background:#fff;border:1px solid #8f8f8f;border-radius:4px;box-sizing:border-box"></div>
<span class="t" style="left:252.73px;top:121.85px;font-size:16.72px;transform:scaleX(0.9232);color:#303030;">Calibri</span>
<svg style="position:absolute;left:382.3px;top:127.30000000000001px;" width="8" height="5" viewBox="0 0 8 5"><path d="M0.8 0.8 L4.0 4.2 L7.2 0.8" fill="none" stroke="#333" stroke-width="1.3"/></svg>
<div style="position:absolute;left:396.5px;top:114px;width:61.5px;height:30.5px;background:#fff;border:1px solid #8f8f8f;border-radius:4px;box-sizing:border-box"></div>
<span class="t" style="left:399.51px;top:121.85px;font-size:16.72px;transform:scaleX(0.8436);color:#303030;">11</span>
<svg style="position:absolute;left:446.5px;top:127.30000000000001px;" width="8" height="5" viewBox="0 0 8 5"><path d="M0.8 0.8 L4.0 4.2 L7.2 0.8" fill="none" stroke="#333" stroke-width="1.3"/></svg>
<span class="t" style="left:466.00px;top:118.89px;font-size:19.62px;transform:scaleX(1.2170);color:#b0b0b0;">A</span>
<svg style="position:absolute;left:478px;top:120px;" width="6" height="4" viewBox="0 0 6 4"><path d="M0.5 3.5 L3 0.8 L5.5 3.5" fill="none" stroke="#b0b0b0" stroke-width="1.1"/></svg>
<span class="t" style="left:500.00px;top:120.12px;font-size:18.17px;transform:scaleX(1.1090);color:#b0b0b0;">A</span>
<svg style="position:absolute;left:511px;top:120px;" width="6" height="4" viewBox="0 0 6 4"><path d="M0.5 0.5 L3 3.2 L5.5 0.5" fill="none" stroke="#b0b0b0" stroke-width="1.1"/></svg>
<span class="t" style="left:256.80px;top:159.73px;font-size:17.44px;transform:scaleX(1.1467);font-weight:700;color:#b0b0b0;">N</span>
<svg style="position:absolute;left:291px;top:161px;" width="11" height="13" viewBox="0 0 11 13"><path d="M4.2 0.8 H10.3 M1 12.2 H7 M7.3 0.8 L4 12.2" fill="none" stroke="#aaaaaa" stroke-width="1.3"/></svg>
<span class="t" style="left:322.82px;top:159.23px;font-size:17.44px;transform:scaleX(0.9718);color:#b0b0b0;">S</span>
<div style="position:absolute;left:323px;top:176px;width:11px;height:1.3px;background:#b0b0b0"></div>
<svg style="position:absolute;left:348.5px;top:166.0px;" width="8" height="5" viewBox="0 0 8 5"><path d="M0.8 0.8 L4.0 4.2 L7.2 0.8" fill="none" stroke="#c4c4c4" stroke-width="1.3"/></svg>
<div style="position:absolute;left:365.5px;top:154px;width:1px;height:30px;background:#dadada"></div>
<svg style="position:absolute;left:372px;top:158px;" width="21" height="21" viewBox="0 0 21 21"><rect x="1" y="1" width="18.5" height="18.5" fill="#f6f6f6" stroke="#b8b8b8" stroke-width="1.1" stroke-dasharray="1.4 1.2"/><path d="M10.2 1 V19.5 M1 10.2 H19.5" stroke="#b8b8b8" stroke-width="1.1" stroke-dasharray="1.4 1.2"/><rect x="0.4" y="18.2" width="19.7" height="1.8" fill="#b0b0b0"/></svg>
<svg style="position:absolute;left:402.5px;top:166.0px;" width="8" height="5" viewBox="0 0 8 5"><path d="M0.8 0.8 L4.0 4.2 L7.2 0.8" fill="none" stroke="#c4c4c4" stroke-width="1.3"/></svg>
<div style="position:absolute;left:419.5px;top:154px;width:1px;height:30px;background:#dadada"></div>
<svg style="position:absolute;left:427px;top:156px;" width="21" height="23" viewBox="0 0 21 23"><path d="M4 11 L10 4 L16.5 10.5 L10 17Z" fill="none" stroke="#b0b0b0" stroke-width="1.4"/><path d="M7 2 L10 4.5" stroke="#b0b0b0" stroke-width="1.4"/><path d="M17.5 12 C19 14 19 15.5 17.5 15.5 C16 15.5 16 14 17.5 12Z" fill="#b0b0b0"/><rect x="0" y="19.5" width="20" height="3.5" fill="#b8b8b8"/></svg>
<svg style="position:absolute;left:456.5px;top:166.0px;" width="8" height="5" viewBox="0 0 8 5"><path d="M0.8 0.8 L4.0 4.2 L7.2 0.8" fill="none" stroke="#c4c4c4" stroke-width="1.3"/></svg>
<span class="t" style="left:480.50px;top:158.50px;font-size:18.90px;transform:scaleX(1.1848);color:#b0b0b0;">A</span>
<div style="position:absolute;left:479.5px;top:176px;width:19px;height:3.5px;background:#b8b8b8"></div>
<svg style="position:absolute;left:507.5px;top:166.0px;" width="8" height="5" viewBox="0 0 8 5"><path d="M0.8 0.8 L4.0 4.2 L7.2 0.8" fill="none" stroke="#c4c4c4" stroke-width="1.3"/></svg>
<div style="position:absolute;left:548px;top:118.9px;width:18px;height:1.2px;background:#a6a6a6"></div>
<div style="position:absolute;left:550.8px;top:124.0px;width:12.600000000000023px;height:1.2px;background:#a6a6a6"></div>
<div style="position:absolute;left:548px;top:129.0px;width:18px;height:1.2px;background:#a6a6a6"></div>
<div style="position:absolute;left:580px;top:122.7px;width:18px;height:1.2px;background:#a6a6a6"></div>
<div style="position:absolute;left:582.7px;top:127.70000000000002px;width:12.599999999999909px;height:1.2px;background:#a6a6a6"></div>
<div style="position:absolute;left:580px;top:132.6px;width:18px;height:1.2px;background:#a6a6a6"></div>
<div style="position:absolute;left:612px;top:127.5px;width:18px;height:1.2px;background:#a6a6a6"></div>
<div style="position:absolute;left:614.7px;top:132.5px;width:12.599999999999909px;height:1.2px;background:#a6a6a6"></div>
<div style="position:absolute;left:612px;top:137.6px;width:18px;height:1.2px;background:#a6a6a6"></div>
<div style="position:absolute;left:548px;top:160.4px;width:18px;height:1.2px;background:#a6a6a6"></div>
<div style="position:absolute;left:580px;top:160.4px;width:18px;height:1.2px;background:#a6a6a6"></div>
<div style="position:absolute;left:612px;top:160.4px;width:18px;height:1.2px;background:#a6a6a6"></div>
<div style="position:absolute;left:548px;top:165.4px;width:13px;height:1.2px;background:#a6a6a6"></div>
<div style="position:absolute;left:582.7px;top:165.4px;width:12.599999999999909px;height:1.2px;background:#a6a6a6"></div>
<div style="position:absolute;left:617.3px;top:165.4px;width:12.700000000000045px;height:1.2px;background:#a6a6a6"></div>
<div style="position:absolute;left:548px;top:170.4px;width:18px;height:1.2px;background:#a6a6a6"></div>
<div style="position:absolute;left:580px;top:170.4px;width:18px;height:1.2px;background:#a6a6a6"></div>
<div style="position:absolute;left:612px;top:170.4px;width:18px;height:1.2px;background:#a6a6a6"></div>
<div style="position:absolute;left:548px;top:175.4px;width:13px;height:1.2px;background:#a6a6a6"></div>
<div style="position:absolute;left:582.7px;top:175.4px;width:12.599999999999909px;height:1.2px;background:#a6a6a6"></div>
<div style="position:absolute;left:617.3px;top:175.4px;width:12.700000000000045px;height:1.2px;background:#a6a6a6"></div>
<div style="position:absolute;left:657px;top:165.4px;width:8px;height:1.2px;background:#a6a6a6"></div>
<div style="position:absolute;left:657px;top:170.4px;width:8px;height:1.2px;background:#a6a6a6"></div>
<div style="position:absolute;left:689px;top:165.4px;width:8px;height:1.2px;background:#a6a6a6"></div>
<div style="position:absolute;left:689px;top:170.4px;width:8px;height:1.2px;background:#a6a6a6"></div>
<div style="position:absolute;left:647px;top:160.4px;width:18px;height:1.2px;background:#a6a6a6"></div>
<div style="position:absolute;left:679px;top:160.4px;width:18px;height:1.2px;background:#a6a6a6"></div>
<div style="position:absolute;left:647px;top:175.4px;width:18px;height:1.2px;background:#a6a6a6"></div>
<div style="position:absolute;left:679px;top:175.4px;width:18px;height:1.2px;background:#a6a6a6"></div>
<svg style="position:absolute;left:647px;top:164px;" width="9" height="9" viewBox="0 0 9 9"><path d="M8.5 4.5 H1 M4.5 1 L1 4.5 L4.5 8" fill="none" stroke="#a6a6a6" stroke-width="1.1"/></svg>
<svg style="position:absolute;left:679px;top:164px;" width="9" height="9" viewBox="0 0 9 9"><path d="M0 4.5 H7.5 M4 1 L7.5 4.5 L4 8" fill="none" stroke="#a6a6a6" stroke-width="1.1"/></svg>
<div style="position:absolute;left:638.3px;top:114px;width:1px;height:30px;background:#dadada"></div>
<div style="position:absolute;left:638.3px;top:154px;width:1px;height:30px;background:#dadada"></div>
<svg style="position:absolute;left:645px;top:118px;" width="23" height="21" viewBox="0 0 23 21"><text x="0" y="0" font-size="11.5" fill="#a6a6a6" font-family="Liberation Sans" transform="translate(4.5 15.5) rotate(-45)">ab</text><path d="M5.5 20 L20.5 5 M14.5 4.5 H21 V11" fill="none" stroke="#a6a6a6" stroke-width="1.1"/></svg>
<svg style="position:absolute;left:673.8px;top:127.1px;" width="7" height="5" viewBox="0 0 7 5"><path d="M0.8 0.8 L3.5 4.2 L6.2 0.8" fill="none" stroke="#b8b8b8" stroke-width="1.3"/></svg>
<div style="position:absolute;left:710.5px;top:114px;width:1px;height:76px;background:#dadada"></div>
<svg style="position:absolute;left:725px;top:119px;" width="19" height="20" viewBox="0 0 19 20"><text x="1" y="9" font-size="10.5" fill="#b0b0b0" font-family="Liberation Sans">ab</text><text x="0.5" y="18.5" font-size="10.5" fill="#b0b0b0" font-family="Liberation Sans">c</text><path d="M18 11 C18 17 13 17 9 17 M11.5 14.5 L9 17 L11.5 19.5" fill="none" stroke="#b0b0b0" stroke-width="1.2"/></svg>
<span class="t" style="left:747.39px;top:122.63px;font-size:15.55px;transform:scaleX(0.9744);color:#acacac;">Quebrar Texto Automaticamente</span>
<svg style="position:absolute;left:722.5px;top:159px;" width="20" height="19" viewBox="0 0 20 19"><rect x="0.7" y="0.7" width="18.5" height="17.5" fill="none" stroke="#b0b0b0" stroke-width="1.3"/><path d="M0.7 5 H19 M0.7 14 H19 M5 0.7 V5 M14 0.7 V5 M5 14 V18 M14 14 V18" stroke="#b0b0b0" stroke-width="1.1"/><path d="M4 9.5 H16 M6.5 7.3 L4 9.5 L6.5 11.7 M13.5 7.3 L16 9.5 L13.5 11.7" fill="none" stroke="#b0b0b0" stroke-width="1.1"/></svg>
<span class="t" style="left:746.82px;top:162.83px;font-size:15.55px;transform:scaleX(0.9451);color:#acacac;">Mesclar e Centralizar</span>
<svg style="position:absolute;left:901.0px;top:167.0px;" width="8" height="5" viewBox="0 0 8 5"><path d="M0.8 0.8 L4.0 4.2 L7.2 0.8" fill="none" stroke="#c4c4c4" stroke-width="1.3"/></svg>
<div style="position:absolute;left:996.5px;top:114px;width:179px;height:30px;background:#f3f3f3;border:1px solid #dcdcdc;border-radius:4px;box-sizing:border-box"></div>
<span class="t" style="left:998.78px;top:121.85px;font-size:16.72px;transform:scaleX(0.8590);color:#b8b8b8;">Geral</span>
<svg style="position:absolute;left:1164.0px;top:127.5px;" width="8" height="5" viewBox="0 0 8 5"><path d="M0.8 0.8 L4.0 4.2 L7.2 0.8" fill="none" stroke="#c4c4c4" stroke-width="1.3"/></svg>
<svg style="position:absolute;left:1001px;top:162px;" width="21" height="18" viewBox="0 0 21 18"><rect x="0.7" y="0.7" width="19" height="11" fill="none" stroke="#b0b0b0" stroke-width="1.2"/><text x="3" y="10" font-size="9" fill="#b0b0b0" font-family="Liberation Sans">€</text><ellipse cx="14.5" cy="11" rx="4.5" ry="2" fill="#fff" stroke="#b0b0b0" stroke-width="1.1"/><path d="M10 11 V15.5 C10 17.5 19 17.5 19 15.5 V11" fill="#fff" stroke="#b0b0b0" stroke-width="1.1"/></svg>
<svg style="position:absolute;left:1030.3px;top:167.0px;" width="8" height="5" viewBox="0 0 8 5"><path d="M0.8 0.8 L4.0 4.2 L7.2 0.8" fill="none" stroke="#555" stroke-width="1.3"/></svg>
<span class="t" style="left:1052.35px;top:157.58px;font-size:24.71px;transform:scaleX(0.8777);color:#b0b0b0;">%</span>
<span class="t" style="left:1083.63px;top:164.08px;font-size:15.26px;transform:scaleX(0.8179);color:#b0b0b0;">000</span>
<div style="position:absolute;left:1111.3px;top:154px;width:1px;height:30px;background:#dadada"></div>
<svg style="position:absolute;left:1118px;top:159px;" width="21" height="21" viewBox="0 0 21 21"><text x="8.5" y="10" font-size="10.5" fill="#b0b0b0" font-family="Liberation Sans">0</text><text x="3" y="19.5" font-size="10.5" fill="#b0b0b0" font-family="Liberation Sans">,00</text><path d="M8.5 5.5 H1.5 M4 3 L1.5 5.5 L4 8" fill="none" stroke="#b0b0b0" stroke-width="1.1"/></svg>
<svg style="position:absolute;left:1150px;top:159px;" width="21" height="21" viewBox="0 0 21 21"><text x="3" y="10" font-size="10.5" fill="#b0b0b0" font-family="Liberation Sans">,00</text><text x="12.5" y="19.5" font-size="10.5" fill="#b0b0b0" font-family="Liberation Sans">0</text><path d="M1 15.5 H10 M7.5 13 L10 15.5 L7.5 18" fill="none" stroke="#b0b0b0" stroke-width="1.1"/></svg>
<svg style="position:absolute;left:1226px;top:113px;" width="38" height="30" viewBox="0 0 38 30"><rect x="1.5" y="1" width="35.2" height="27.9" fill="#f3f3f3"/><rect x="8" y="1" width="16" height="9.3" fill="#c9c9c9"/><rect x="8" y="10.3" width="10.7" height="9.3" fill="#c9c9c9"/><rect x="8" y="19.6" width="17.7" height="9.3" fill="#c9c9c9"/><path d="M1.5 10.3 H36.7 M1.5 19.6 H36.7 M8 1 V29 M29.6 1 V29" stroke="#b4b4b4" stroke-width="1.1"/><rect x="1.5" y="1" width="35.2" height="27.9" fill="none" stroke="#a8a8a8" stroke-width="1.5"/></svg>
<span class="t" style="left:1204.51px;top:153.36px;font-size:15.99px;transform:scaleX(0.9299);color:#acacac;">Formatação</span>
<span class="t" style="left:1197.84px;top:173.49px;font-size:15.84px;transform:scaleX(0.9591);color:#acacac;">Condicional</span>
<svg style="position:absolute;left:1281.9px;top:177.0px;" width="7" height="5" viewBox="0 0 7 5"><path d="M0.8 0.8 L3.5 4.2 L6.2 0.8" fill="none" stroke="#c4c4c4" stroke-width="1.3"/></svg>
<svg style="position:absolute;left:1330px;top:113px;" width="42" height="36" viewBox="0 0 42 36"><rect x="1.4" y="1" width="35.2" height="27.9" fill="#f3f3f3"/><rect x="13" y="10.3" width="11.5" height="9.3" fill="#c9c9c9"/><rect x="24.5" y="10.3" width="12" height="18.6" fill="#d4d4d4"/><path d="M1.4 10.3 H36.6 M1.4 19.6 H36.6 M13 1 V29 M24.5 1 V29" stroke="#b4b4b4" stroke-width="1.1"/><rect x="1.4" y="1" width="35.2" height="27.9" fill="none" stroke="#a8a8a8" stroke-width="1.5"/><path d="M37.5 8.5 C36 9 29 17.5 25 23 L27.5 25 C31.5 19.5 38.5 11 38.5 9.5Z" fill="#c4c4c4" stroke="#fff" stroke-width="0.8"/><path d="M24.5 22.5 C21.5 22 19 24 18.5 27 C18 29.5 16 31 10.5 32 C16 33.5 22.5 33 25.5 30 C27.5 28 28 26 27.5 25Z" fill="#c4c4c4" stroke="#fff" stroke-width="0.8"/></svg>
<span class="t" style="left:1296.78px;top:153.36px;font-size:15.99px;transform:scaleX(0.9509);color:#acacac;">Formatar como</span>
<span class="t" style="left:1320.71px;top:173.49px;font-size:15.84px;transform:scaleX(0.9046);color:#acacac;">Tabela</span>
<svg style="position:absolute;left:1368.5px;top:177.5px;" width="7" height="5" viewBox="0 0 7 5"><path d="M0.8 0.8 L3.5 4.2 L6.2 0.8" fill="none" stroke="#c4c4c4" stroke-width="1.3"/></svg>
<svg style="position:absolute;left:1420px;top:113px;" width="42" height="36" viewBox="0 0 42 36"><rect x="1.25" y="1" width="35.2" height="27.9" fill="#f3f3f3"/><rect x="9" y="9" width="27.4" height="12" fill="#c9c9c9"/><path d="M1.25 9 H36.5 M1.25 21 H36.5 M9 1 V29" stroke="#b4b4b4" stroke-width="1.1"/><rect x="1.25" y="1" width="35.2" height="27.9" fill="none" stroke="#a8a8a8" stroke-width="1.5"/><path d="M37.5 8.5 C36 9 29 17.5 25 23 L27.5 25 C31.5 19.5 38.5 11 38.5 9.5Z" fill="#c4c4c4" stroke="#fff" stroke-width="0.8"/><path d="M24.5 22.5 C21.5 22 19 24 18.5 27 C18 29.5 16 31 10.5 32 C16 33.5 22.5 33 25.5 30 C27.5 28 28 26 27.5 25Z" fill="#c4c4c4" stroke="#fff" stroke-width="0.8"/></svg>
<span class="t" style="left:1406.32px;top:153.36px;font-size:15.99px;transform:scaleX(0.9191);color:#acacac;">Estilos de</span>
<span class="t" style="left:1410.28px;top:173.49px;font-size:15.84px;transform:scaleX(0.9053);color:#acacac;">Célula</span>
<svg style="position:absolute;left:1456.5px;top:177.5px;" width="7" height="5" viewBox="0 0 7 5"><path d="M0.8 0.8 L3.5 4.2 L6.2 0.8" fill="none" stroke="#c4c4c4" stroke-width="1.3"/></svg>
<svg style="position:absolute;left:1498px;top:110px;" width="21" height="18" viewBox="0 0 21 18"><rect x="0.7" y="0.7" width="19" height="16" fill="none" stroke="#b0b0b0" stroke-width="1.2"/><path d="M0.7 6 H20 M0.7 11.5 H20 M10 0.7 V17" stroke="#b0b0b0" stroke-width="1"/><path d="M9 8.7 H2 M4.5 6.5 L2 8.7 L4.5 11" fill="none" stroke="#b0b0b0" stroke-width="1.2"/></svg>
<span class="t" style="left:1522.70px;top:112.26px;font-size:15.99px;transform:scaleX(0.9048);color:#acacac;">Inserir</span>
<svg style="position:absolute;left:1578.5px;top:117.0px;" width="8" height="5" viewBox="0 0 8 5"><path d="M0.8 0.8 L4.0 4.2 L7.2 0.8" fill="none" stroke="#444" stroke-width="1.3"/></svg>
<svg style="position:absolute;left:1498px;top:142px;" width="21" height="18" viewBox="0 0 21 18"><rect x="0.7" y="0.7" width="19" height="16" fill="none" stroke="#b0b0b0" stroke-width="1.2"/><path d="M0.7 6 H20 M0.7 11.5 H20 M7 0.7 V17" stroke="#b0b0b0" stroke-width="1"/><path d="M11 5.5 L17 12 M17 5.5 L11 12" stroke="#b0b0b0" stroke-width="1.3"/></svg>
<span class="t" style="left:1522.86px;top:144.36px;font-size:15.99px;transform:scaleX(0.8927);color:#acacac;">Excluir</span>
<svg style="position:absolute;left:1581.0px;top:148.5px;" width="8" height="5" viewBox="0 0 8 5"><path d="M0.8 0.8 L4.0 4.2 L7.2 0.8" fill="none" stroke="#444" stroke-width="1.3"/></svg>
<svg style="position:absolute;left:1498px;top:173px;" width="21" height="20" viewBox="0 0 21 20"><rect x="0.7" y="2.5" width="19" height="16.5" fill="#fff" stroke="#555" stroke-width="1.2"/><rect x="3.5" y="6" width="13" height="8" fill="#4a90e2"/><path d="M0.7 6 H20 M0.7 10.5 H20 M0.7 15 H20 M5 2.5 V19 M10.2 2.5 V19 M15.2 2.5 V19" stroke="#555" stroke-width="0.9"/><path d="M1.5 0.5 V4 M18.5 0.5 V4" stroke="#2b73d1" stroke-width="1.2"/><path d="M1.5 2 H18.5" stroke="#2b73d1" stroke-width="1.2"/></svg>
<span class="t" style="left:1522.81px;top:176.56px;font-size:15.41px;transform:scaleX(0.9663);color:#303030;">Formatar</span>
<svg style="position:absolute;left:1587.5px;top:179.5px;" width="8" height="5" viewBox="0 0 8 5"><path d="M0.8 0.8 L4.0 4.2 L7.2 0.8" fill="none" stroke="#444" stroke-width="1.3"/></svg>
<svg style="position:absolute;left:1634px;top:110px;" width="18" height="19" viewBox="0 0 18 19"><path d="M16.6 1.6 H2.5 L10 9.2 L2.3 16.9 H16.6" fill="none" stroke="#444" stroke-width="1.5" stroke-linejoin="miter"/></svg>
<svg style="position:absolute;left:1662.5px;top:117.0px;" width="8" height="5" viewBox="0 0 8 5"><path d="M0.8 0.8 L4.0 4.2 L7.2 0.8" fill="none" stroke="#444" stroke-width="1.3"/></svg>
<svg style="position:absolute;left:1633px;top:142px;" width="21" height="19" viewBox="0 0 21 19"><rect x="0.7" y="0.7" width="19" height="17" fill="#fff" stroke="#444" stroke-width="1.3"/><path d="M0.7 4 H20" stroke="#444" stroke-width="1.2"/><path d="M10 6.5 V14 M7 11 L10 14 L13 11" fill="none" stroke="#2b73d1" stroke-width="1.4"/></svg>
<svg style="position:absolute;left:1660.5px;top:149.0px;" width="8" height="5" viewBox="0 0 8 5"><path d="M0.8 0.8 L4.0 4.2 L7.2 0.8" fill="none" stroke="#444" stroke-width="1.3"/></svg>
<svg style="position:absolute;left:1632px;top:173px;" width="22" height="20" viewBox="0 0 22 20"><path d="M1 11 L9 19 L14 14 L6 6Z" fill="#e3b0ec" stroke="#b03fc4" stroke-width="1.5" stroke-linejoin="round"/><path d="M6 6 L11 1 L21 10 L14 14Z" fill="#fff" stroke="#b03fc4" stroke-width="1.5" stroke-linejoin="round"/></svg>
<svg style="position:absolute;left:1660.5px;top:180.5px;" width="8" height="5" viewBox="0 0 8 5"><path d="M0.8 0.8 L4.0 4.2 L7.2 0.8" fill="none" stroke="#444" stroke-width="1.3"/></svg>
<svg style="position:absolute;left:1696px;top:110px;" width="40" height="36" viewBox="0 0 40 36"><path d="M2.3 16 L7.5 2.2 L12.7 16 M4.3 11 H10.7" fill="none" stroke="#bdbdbd" stroke-width="1.5"/><path d="M2.5 19.7 H12.5 L2.5 33.5 H13" fill="none" stroke="#bdbdbd" stroke-width="1.5"/><path d="M17 10.2 H36.5 V13 L29.5 20.5 V28.5 H24 V20.5 L17 13Z" fill="#ececec" stroke="#bdbdbd" stroke-width="1.5" stroke-linejoin="round"/></svg>
<span class="t" style="left:1681.79px;top:153.51px;font-size:15.70px;transform:scaleX(0.9103);color:#acacac;">Classificar</span>
<span class="t" style="left:1683.11px;top:173.51px;font-size:15.70px;transform:scaleX(0.9318);color:#acacac;">e Filtrar</span>
<svg style="position:absolute;left:1737.5px;top:177.5px;" width="7" height="5" viewBox="0 0 7 5"><path d="M0.8 0.8 L3.5 4.2 L6.2 0.8" fill="none" stroke="#c4c4c4" stroke-width="1.3"/></svg>
<svg style="position:absolute;left:1777px;top:108px;" width="40" height="40" viewBox="0 0 40 40"><circle cx="24.25" cy="15.1" r="13" fill="#fafafa" stroke="#3a3a3a" stroke-width="1.45"/><path d="M15 24.5 L1.8 38.2" stroke="#3a3a3a" stroke-width="1.5" stroke-linecap="round"/></svg>
<span class="t" style="left:1760.83px;top:153.51px;font-size:15.70px;transform:scaleX(0.9354);color:#303030;">Localizar e</span>
<span class="t" style="left:1754.81px;top:173.51px;font-size:15.70px;transform:scaleX(0.9381);color:#303030;">Selecionar</span>
<svg style="position:absolute;left:1829.0px;top:177.5px;" width="7" height="5" viewBox="0 0 7 5"><path d="M0.8 0.8 L3.5 4.2 L6.2 0.8" fill="none" stroke="#333" stroke-width="1.3"/></svg>
<svg style="position:absolute;left:1886.5px;top:204.5px;" width="11" height="5" viewBox="0 0 11 5"><path d="M0.8 0.8 L5.5 4.2 L10.2 0.8" fill="none" stroke="#333" stroke-width="1.3"/></svg>
<svg style="position:absolute;left:21px;top:236px;" width="19" height="22" viewBox="0 0 19 22"><path d="M5.5 20.6 H0.7 V1.2 H8.7 L15.2 7.4 V9.5" fill="none" stroke="#444" stroke-width="1.3"/><path d="M8.7 1.2 V7.4 H15.2" fill="none" stroke="#444" stroke-width="1.2"/><rect x="8.7" y="10.2" width="6.2" height="3.8" fill="#fff" stroke="#444" stroke-width="1.2"/><rect x="5.9" y="14" width="11.9" height="4.7" fill="#fff" stroke="#444" stroke-width="1.3"/><rect x="8.7" y="17.5" width="6.2" height="3.1" fill="#fff" stroke="#444" stroke-width="1.2"/></svg>
<span class="t" style="left:44.40px;top:238.56px;font-size:15.41px;transform:scaleX(0.9611);color:#303030;">Visualizar Impressão e Imprimir</span>
<svg style="position:absolute;left:274px;top:236px;" width="18" height="22" viewBox="0 0 18 22"><path d="M1.5 1.2 H10.5 L16.5 7.2 V20.7 H1.5Z M10.5 1.2 V7.2 H16.5" fill="none" stroke="#555" stroke-width="1.3" stroke-linejoin="round"/></svg>
<span class="t" style="left:297.22px;top:238.56px;font-size:15.41px;transform:scaleX(1.0387);color:#303030;">Novo</span>
<svg style="position:absolute;left:360px;top:241px;" width="10" height="10" viewBox="0 0 10 10"><path d="M0.5 1 H9.5" stroke="#444" stroke-width="1.2"/><path d="M1.5 4.5 L5 8 L8.5 4.5" fill="none" stroke="#444" stroke-width="1.2"/></svg>
<div style="position:absolute;left:10.5px;top:276px;width:125.5px;height:30px;background:#fff;border:1px solid #d8d8d8;border-radius:4px;box-sizing:border-box"></div>
<span class="t" style="left:16.86px;top:284.36px;font-size:15.99px;transform:scaleX(0.9718);color:#303030;">B6</span>
<svg style="position:absolute;left:119.0px;top:290.3px;" width="10" height="5" viewBox="0 0 10 5"><path d="M0.8 0.8 L5.0 4.2 L9.2 0.8" fill="none" stroke="#222" stroke-width="1.3"/></svg>
<svg style="position:absolute;left:147px;top:285px;" width="4" height="14" viewBox="0 0 4 14"><circle cx="2" cy="2" r="1.4" fill="#444"/><circle cx="2" cy="7" r="1.4" fill="#444"/><circle cx="2" cy="12" r="1.4" fill="#444"/></svg>
<div style="position:absolute;left:162.5px;top:276px;width:91px;height:30px;background:#fff;border:1px solid #d8d8d8;border-radius:4px;box-sizing:border-box"></div>
<svg style="position:absolute;left:170px;top:284px;" width="16" height="15" viewBox="0 0 16 15"><path d="M1 1 L15 14 M15 1 L1 14" stroke="#b8b8b8" stroke-width="1.4"/></svg>
<svg style="position:absolute;left:197px;top:284px;" width="21" height="15" viewBox="0 0 21 15"><path d="M1 8 L6.5 13.5 L20 1" fill="none" stroke="#b8b8b8" stroke-width="1.4"/></svg>
<svg style="position:absolute;left:226px;top:278px;" width="26" height="26" viewBox="0 0 26 26"><text x="3" y="19.4" font-size="21" font-style="italic" fill="#333" font-family="Liberation Serif">f</text><text x="10.5" y="19.4" font-size="17.5" font-style="italic" fill="#333" font-family="Liberation Serif">x</text></svg>
<div style="position:absolute;left:259.5px;top:276px;width:1650.5px;height:30px;background:#fff;border:1px solid #d8d8d8;border-radius:4px;box-sizing:border-box"></div>
<span class="t" style="left:272.67px;top:284.49px;font-size:15.84px;transform:scaleX(1.0479);color:#303030;">Produto 1</span>
<svg style="position:absolute;left:1893px;top:286px;" width="12" height="8" viewBox="0 0 12 8"><path d="M1 1 L6 6 L11 1" fill="none" stroke="#222" stroke-width="1.6"/></svg>
<div style="position:absolute;left:589px;top:314px;width:1px;height:708px;background:#8a8a8a"></div>
<div style="position:absolute;left:589px;top:337px;width:1px;height:71px;background:#cfe6d8"></div>
<div style="position:absolute;left:1894px;top:312px;width:26px;height:710px;background:#f4f4f4"></div>
<div style="position:absolute;left:1894px;top:337px;width:1px;height:685px;background:#a0a0a0"></div>
<svg style="position:absolute;left:1902px;top:320px;" width="11" height="8" viewBox="0 0 11 8"><path d="M0.5 7.5 L5.5 1 L10.5 7.5Z" fill="#777"/></svg>
<div style="position:absolute;left:1902.3px;top:335px;width:10.5px;height:20.6px;background:#858585;border-radius:5px"></div>
<svg style="position:absolute;left:1902px;top:1010px;" width="11" height="8" viewBox="0 0 11 8"><path d="M0.5 0.5 L5.5 7 L10.5 0.5Z" fill="#777"/></svg>
<div style="position:absolute;left:0px;top:1022px;width:1920px;height:30px;background:#f3f3f3"></div>
<div style="position:absolute;left:0px;top:1023px;width:16px;height:29px;background:#ebebeb"></div>
<div style="position:absolute;left:0px;top:1022.5px;width:1894px;height:1px;background:#c6c6c6"></div>
<div style="position:absolute;left:510.5px;top:1023px;width:106px;height:25px;background:#fff;border-left:1px solid #c6c6c6;border-right:1px solid #c6c6c6;box-sizing:border-box"></div>
<div style="position:absolute;left:0px;top:1051.5px;width:1920px;height:1px;background:#e4e4e4"></div>
<svg style="position:absolute;left:27px;top:1032px;" width="6" height="10" viewBox="0 0 6 10"><path d="M5.5 0.5 L0.5 5 L5.5 9.5Z" fill="#b8b8b8"/></svg>
<svg style="position:absolute;left:56px;top:1032px;" width="6" height="10" viewBox="0 0 6 10"><path d="M0.5 0.5 L5.5 5 L0.5 9.5Z" fill="#1e6b3f"/></svg>
<span class="t" style="left:115.23px;top:1027.17px;font-size:16.57px;transform:scaleX(0.9339);color:#3b3b3b;">CAD_PRO</span>
<span class="t" style="left:216.50px;top:1027.17px;font-size:16.57px;transform:scaleX(0.9629);color:#3b3b3b;">CAD_FUN</span>
<span class="t" style="left:318.23px;top:1027.17px;font-size:16.57px;transform:scaleX(0.9273);color:#3b3b3b;">CAD_FOR</span>
<span class="t" style="left:417.48px;top:1027.17px;font-size:16.57px;transform:scaleX(0.9862);color:#3b3b3b;">CAD_ANO</span>
<span class="t" style="left:521.64px;top:1027.17px;font-size:16.57px;font-weight:700;color:#1e6b3f;">COTAÇÃO</span>
<span class="t" style="left:628.71px;top:1027.17px;font-size:16.57px;transform:scaleX(0.9562);color:#3b3b3b;">COMPRA</span>
<span class="t" style="left:724.86px;top:1027.17px;font-size:16.57px;transform:scaleX(0.8589);color:#3b3b3b;">REL_GER</span>
<span class="t" style="left:817.17px;top:1027.17px;font-size:16.57px;transform:scaleX(0.8490);color:#3b3b3b;">REL_PER</span>
<span class="t" style="left:907.10px;top:1027.17px;font-size:16.57px;transform:scaleX(0.9043);color:#3b3b3b;">REL_FUN</span>
<span class="t" style="left:1002.15px;top:1027.17px;font-size:16.57px;transform:scaleX(0.8656);color:#3b3b3b;">REL_FOR</span>
<span class="t" style="left:1094.15px;top:1027.17px;font-size:16.57px;transform:scaleX(0.8708);color:#3b3b3b;">REL_PED</span>
<span class="t" style="left:1188.67px;top:1027.17px;font-size:16.57px;transform:scaleX(0.9440);color:#3b3b3b;">ORDEM_COMPRA</span>
<span class="t" style="left:1352.10px;top:1027.17px;font-size:16.57px;transform:scaleX(0.9065);color:#3b3b3b;">REL_CON_ORC</span>
<span class="t" style="left:1492.10px;top:1027.17px;font-size:16.57px;transform:scaleX(0.9058);color:#3b3b3b;">REL_CON_ORC_2</span>
<span class="t" style="left:1648.22px;top:1027.17px;font-size:16.57px;transform:scaleX(0.8185);color:#3b3b3b;">REL_SAV_</span>
<svg style="position:absolute;left:1724px;top:1036px;" width="14" height="4" viewBox="0 0 14 4"><rect x="0.5" y="0.5" width="2.2" height="2.2" fill="#1e5a36"/><rect x="5.7" y="0.5" width="2.2" height="2.2" fill="#1e5a36"/><rect x="10.9" y="0.5" width="2.2" height="2.2" fill="#1e5a36"/></svg>
<div style="position:absolute;left:510px;top:1046.5px;width:106.5px;height:2px;background:#1e6b3f"></div>
<div style="position:absolute;left:104px;top:1027px;width:1px;height:20px;background:#a8a8a8"></div>
<div style="position:absolute;left:204.3px;top:1027px;width:1px;height:20px;background:#a8a8a8"></div>
<div style="position:absolute;left:305.7px;top:1027px;width:1px;height:20px;background:#a8a8a8"></div>
<div style="position:absolute;left:405.7px;top:1027px;width:1px;height:20px;background:#a8a8a8"></div>
<div style="position:absolute;left:713px;top:1027px;width:1px;height:20px;background:#a8a8a8"></div>
<div style="position:absolute;left:805.7px;top:1027px;width:1px;height:20px;background:#a8a8a8"></div>
<div style="position:absolute;left:895.7px;top:1027px;width:1px;height:20px;background:#a8a8a8"></div>
<div style="position:absolute;left:989px;top:1027px;width:1px;height:20px;background:#a8a8a8"></div>
<div style="position:absolute;left:1082px;top:1027px;width:1px;height:20px;background:#a8a8a8"></div>
<div style="position:absolute;left:1174.3px;top:1027px;width:1px;height:20px;background:#a8a8a8"></div>
<div style="position:absolute;left:1340.7px;top:1027px;width:1px;height:20px;background:#a8a8a8"></div>
<div style="position:absolute;left:1479.3px;top:1027px;width:1px;height:20px;background:#a8a8a8"></div>
<div style="position:absolute;left:1636px;top:1027px;width:1px;height:20px;background:#a8a8a8"></div>
<svg style="position:absolute;left:1749px;top:1027px;" width="21" height="21" viewBox="0 0 21 21"><circle cx="10.5" cy="10.5" r="9.3" fill="none" stroke="#555" stroke-width="1.3"/><path d="M10.5 5.5 V15.5 M5.5 10.5 H15.5" stroke="#555" stroke-width="1.3"/></svg>
<svg style="position:absolute;left:1787px;top:1031px;" width="4" height="15" viewBox="0 0 4 15"><rect x="0.8" y="0.8" width="2.4" height="2.4" fill="#444"/><rect x="0.8" y="6.3" width="2.4" height="2.4" fill="#444"/><rect x="0.8" y="11.8" width="2.4" height="2.4" fill="#444"/></svg>
<svg style="position:absolute;left:1809px;top:1031px;" width="8" height="12" viewBox="0 0 8 12"><path d="M7.5 0.5 L0.5 6 L7.5 11.5Z" fill="#666"/></svg>
<div style="position:absolute;left:1825px;top:1031.5px;width:33px;height:10.5px;background:#7f7f7f;border-radius:5px"></div>
<svg style="position:absolute;left:1881px;top:1031px;" width="8" height="12" viewBox="0 0 8 12"><path d="M0.5 0.5 L7.5 6 L0.5 11.5Z" fill="#666"/></svg>
<div style="position:absolute;left:0px;top:1052px;width:1920px;height:28px;background:#f3f3f3"></div>
<div style="position:absolute;left:0px;top:1078px;width:1920px;height:2px;background:#d6d6d6"></div>
<span class="t" style="left:8.23px;top:1058.58px;font-size:15.26px;transform:scaleX(0.8798);color:#303030;">Pronto</span>
<svg style="position:absolute;left:72px;top:1057px;" width="20" height="19" viewBox="0 0 20 19"><path d="M8 16.5 H1 V1.2 H17.2 V9" fill="none" stroke="#444" stroke-width="1.3"/><path d="M1 3.4 H17.2" stroke="#444" stroke-width="1.4"/><path d="M3.3 7 H7.5 M3.3 9.8 H5.5 M3.3 12.6 H5.5" stroke="#555" stroke-width="1"/><circle cx="12.6" cy="12.6" r="4.3" fill="#f3f3f3" stroke="#333" stroke-width="1.4"/><circle cx="12.6" cy="12.6" r="2" fill="#333"/></svg>
<svg style="position:absolute;left:105px;top:1052px;" width="30" height="28" viewBox="0 0 30 28"><circle cx="15.7" cy="7.9" r="2.4" fill="none" stroke="#222" stroke-width="1.2"/><path d="M13.6 9.5 C12 8.8 9.5 8.3 8.6 9 C7.6 10 8.5 11.2 10 11.5 C11.5 11.9 12.7 12.3 12.7 14 C12.6 16 11.6 18 11 20 C10.6 21.5 12.5 22.5 13.3 21 L15.8 16.6 L16.7 18.6 M17.8 9.5 C19.5 8.8 22 8.3 22.8 9.2 C23.6 10.2 22.7 11.4 21 11.9 L18.5 12.8" fill="none" stroke="#222" stroke-width="1.2" stroke-linecap="round" stroke-linejoin="round"/><path d="M17 14 L25.7 22.7 M25.7 14 L17 22.7" stroke="#333" stroke-width="1"/></svg>
<span class="t" style="left:134.00px;top:1058.58px;font-size:15.26px;transform:scaleX(0.8489);color:#303030;">Acessibilidade: investigar</span>
<div style="position:absolute;left:1548px;top:1053px;width:49px;height:25px;background:#e0e0e0"></div>
<svg style="position:absolute;left:1564px;top:1057px;" width="17" height="17" viewBox="0 0 17 17"><rect x="0.7" y="0.7" width="15.6" height="15.6" fill="none" stroke="#444" stroke-width="1.3"/><path d="M0.7 6 H16.3 M0.7 11 H16.3 M6 0.7 V16.3 M11 0.7 V16.3" stroke="#444" stroke-width="1.1"/></svg>
<svg style="position:absolute;left:1614px;top:1057px;" width="18" height="17" viewBox="0 0 18 17"><rect x="0.7" y="0.7" width="16.6" height="15.6" fill="none" stroke="#444" stroke-width="1.3"/><rect x="3.5" y="3.5" width="11" height="10" fill="none" stroke="#444" stroke-width="1.1"/><path d="M5.5 6.5 H12.5 M5.5 9 H12.5 M5.5 11.5 H12.5" stroke="#444" stroke-width="0.9"/></svg>
<svg style="position:absolute;left:1664px;top:1057px;" width="18" height="17" viewBox="0 0 18 17"><path d="M0.7 16.3 V0.7 H17.3 V16.3 M0.7 9 H17.3 M9 0.7 V9" fill="none" stroke="#444" stroke-width="1.3"/></svg>
<div style="position:absolute;left:1705px;top:1065px;width:10px;height:1.3px;background:#555"></div>
<div style="position:absolute;left:1721px;top:1065.5px;width:125px;height:1px;background:#777"></div>
<div style="position:absolute;left:1781.5px;top:1058px;width:5.5px;height:15px;background:#555;border-radius:1px"></div>
<svg style="position:absolute;left:1851px;top:1060px;" width="11" height="11" viewBox="0 0 11 11"><path d="M5.5 0 V11 M0 5.5 H11" stroke="#555" stroke-width="1.3"/></svg>
<span class="t" style="left:1877.41px;top:1058.58px;font-size:15.26px;transform:scaleX(0.8316);color:#303030;">100%</span>
</body></html>
